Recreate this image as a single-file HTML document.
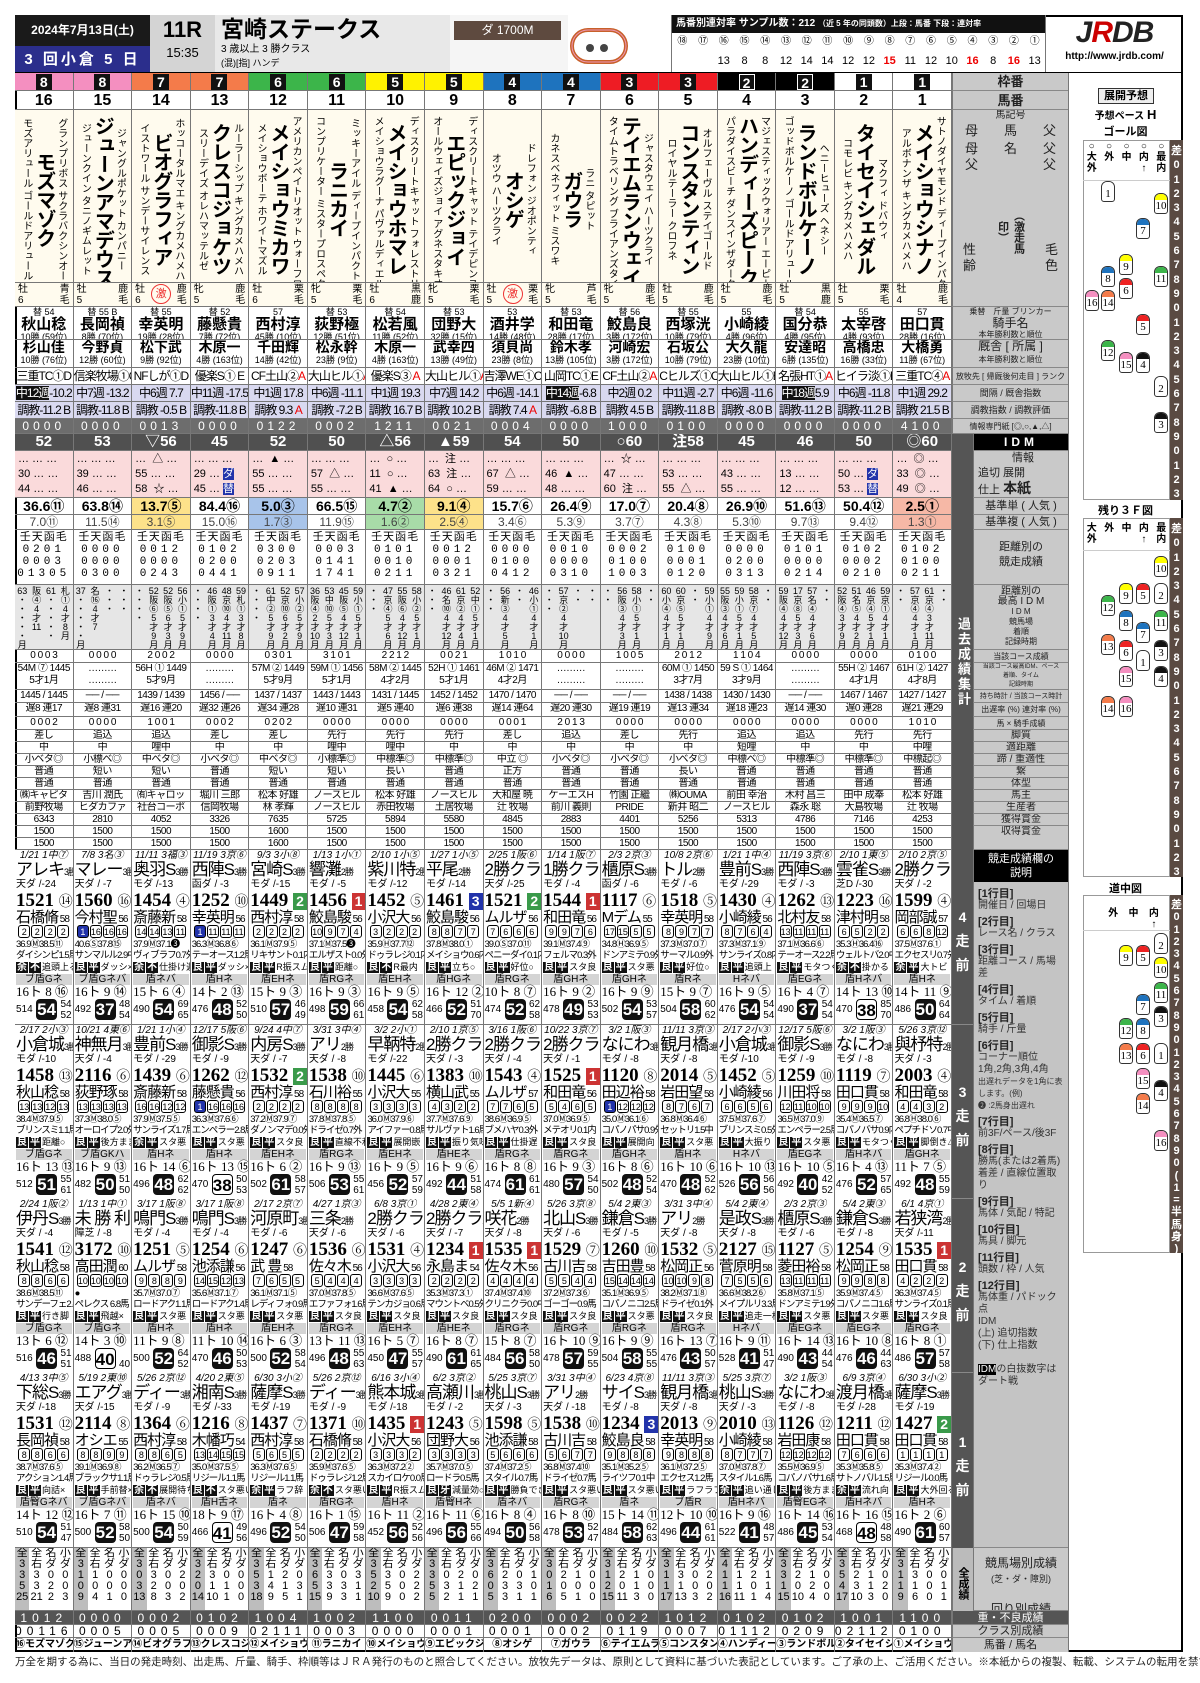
<!DOCTYPE html>
<html lang="ja"><head><meta charset="utf-8"><title>JRDB 宮崎ステークス</title>
<style>
*{box-sizing:border-box;margin:0;padding:0}
body{width:1200px;height:1683px;background:#fff;position:relative;overflow:hidden;font-family:"Liberation Sans","Noto Sans CJK JP",sans-serif;color:#000}
.a{position:absolute}
.sheet{left:15px;top:15px;width:1168px;height:1637px;border:2px solid #000}
.row{position:absolute;left:15px;width:937px;display:grid;grid-template-columns:repeat(16,1fr);border-bottom:1px solid #777}
.row>div{border-right:1px solid #777;overflow:hidden;text-align:center;position:relative}
.lab{position:absolute;left:952px;width:116px;background:#c9c9c9;border-bottom:1px solid #888;border-left:1px solid #777;text-align:center;font-size:10px;overflow:hidden;color:#222}
.wk>div{font-size:15px;font-weight:bold;display:flex;align-items:center;justify-content:center}
.wk span{display:inline-block;background:#111;color:#fff;width:16px;height:16px;line-height:16px;font-size:14px}
.um>div{font-size:16px;font-weight:bold;line-height:19px}
.nm>div{background:#fffbee;display:flex;flex-direction:row-reverse;justify-content:center;gap:1px;padding-top:6px}
.vt{writing-mode:vertical-rl;font-size:10px;line-height:11px;white-space:nowrap}
.vn{writing-mode:vertical-rl;font-size:20px;font-weight:bold;line-height:22px;white-space:nowrap;letter-spacing:-1px}
.sx>div{background:#fffbee;font-size:10px;line-height:11px;text-align:left;padding:1px 3px}
.sx b{float:right;font-weight:normal;text-align:right}
.jk>div{font-size:9px;line-height:10px}
.jk .n{font-size:15px;font-weight:bold;line-height:15px}
.tr>div{font-size:9px;line-height:10px}
.tr .n{font-size:14px;font-weight:bold;line-height:15px}
.hb>div{font-size:12px;line-height:16px;white-space:nowrap;letter-spacing:-1px}
.lv>div{background:#d9d9f0;font-size:12px;line-height:16px;white-space:nowrap;letter-spacing:-1px}
.inf>div{background:#6d6d6d;color:#fff;font-size:12px;line-height:14px;letter-spacing:4px}
.idm>div{background:#505050;color:#fff;font-size:15px;font-weight:bold;line-height:16px}
.pk>div{background:#fadadb;font-size:11px;line-height:15px;text-align:left;padding:1px 3px;white-space:pre}
.k1>div{font-size:14px;font-weight:bold;line-height:16px}
.k2>div{font-size:12px;line-height:14px;color:#444}
.ds>div{font-size:11px;line-height:12px;font-family:"Liberation Mono","Noto Sans CJK JP",monospace;letter-spacing:4px;padding-top:1px;white-space:nowrap}
.ds>div>span{letter-spacing:1px;font-family:"Liberation Sans","Noto Sans CJK JP",sans-serif;font-size:11px}
.bs>div{background:#e6e6e6;font-size:9px;line-height:9px;display:grid;grid-template-columns:repeat(4,1fr);padding-top:2px}
.sm>div{font-size:10px;line-height:12px;white-space:nowrap;letter-spacing:-.5px}
.rc>div{background:#fff;font-size:10px;text-align:left;padding:0 1px;height:174px}
.l1{font-size:10px;font-style:italic;height:11px;line-height:11px;text-align:center}
.l2{font-size:17px;height:18px;line-height:18px;white-space:nowrap;letter-spacing:-1px}
.l2 small{font-size:9px}
.l3{font-size:10px;height:12px;line-height:12px}
.l4{font-family:"Liberation Serif","Noto Serif CJK SC",serif;font-weight:bold;font-size:19px;height:19px;line-height:19px;white-space:nowrap}
.l4 .ci{font-size:14px;font-weight:normal}
.l4 .w{display:inline-block;color:#fff;font-family:"Liberation Sans",sans-serif;font-size:14px;width:14px;line-height:17px;text-align:center}
.l5{font-size:15px;height:15px;line-height:15px;white-space:nowrap;letter-spacing:-1px}
.l5 small{font-size:10px}
.l6{height:14px;display:flex;gap:1px;justify-content:center}
.l6 i{font-style:normal;border:1px solid #000;border-radius:3px;font-size:9px;width:12px;height:13px;line-height:12px;text-align:center}
.l7,.l8{font-size:9.5px;height:11px;line-height:11px;white-space:nowrap;letter-spacing:-1px}
.l9{font-size:9px;height:13px;line-height:13px;white-space:nowrap}
.l9 b{background:#111;color:#fff;font-size:10px;padding:0 1px;margin-right:1px}
.l10{background:#d4d4d4;font-size:10px;height:11px;line-height:11px;text-align:center}
.l11{font-family:"Liberation Serif",serif;font-size:13px;height:13px;line-height:13px;white-space:nowrap}
.l12{display:flex;align-items:center;justify-content:space-between;height:23px;font-size:10px}
.l12 b{background:#111;color:#fff;font-size:17px;border-radius:4px;width:21px;height:21px;line-height:21px;text-align:center}
.l12 b.o{background:#fff;color:#000;border:1px solid #000}
.l12 span{line-height:11px}
.zs>div{display:grid;grid-template-columns:repeat(4,1fr);font-size:11px;line-height:11px}
.zs>div>span{display:flex;flex-direction:column;align-items:center}
.zs>div>span:first-child{background:#bdbdbd}
.dk>div{background:#555;color:#fff;font-size:12px;line-height:14px;letter-spacing:5px}
.cl>div{font-size:12px;line-height:13px;letter-spacing:5px}
.hn>div{font-size:10px;font-weight:bold;line-height:14px;white-space:nowrap}
.mk{position:absolute;width:14px;height:21px;border:1px solid #333;border-radius:6px 6px 3px 3px;background:#fff;font-family:"Liberation Serif",serif;font-size:11px;text-align:center;line-height:25px;overflow:hidden}
.mk::before{content:"";position:absolute;left:0;top:0;width:100%;height:6px}
.c1::before{background:#fff}.c2::before{background:#111}.c3::before{background:#e22}.c4::before{background:#1e73be}.c5::before{background:#ff0}.c6::before{background:#3cb54a}.c7::before{background:#f47b4a}.c8::before{background:#f48fc0}
.scale{position:absolute;width:13px;background:#5a4a42;color:#fff;font-size:11px;line-height:14.3px;text-align:center;font-weight:bold}
.ex{font-size:10px;line-height:12px;text-align:left;padding:2px 4px;color:#333}
.ex b{display:block;font-size:11px;margin-top:4px;color:#222}
</style></head><body>
<div class="a sheet"></div>

<!-- HEADER -->
<div class="a" style="left:15px;top:15px;width:135px;height:31px;background:#1a1a1a;color:#fff;font-size:12px;font-weight:bold;line-height:31px;text-align:center">2024年7月13日(土)</div>
<div class="a" style="left:15px;top:46px;width:135px;height:27px;background:#2b2e8c;color:#fff;font-size:15px;font-weight:bold;line-height:27px;text-align:center;letter-spacing:3px">3 回小倉 5 日</div>
<div class="a" style="left:150px;top:15px;width:65px;height:58px;background:#d4d4d4;text-align:center"><div style="font-size:22px;font-weight:bold;line-height:30px">11R</div><div style="font-size:13px">15:35</div></div>
<div class="a" style="left:215px;top:15px;width:235px;height:58px;background:#e8e8e8;padding-left:6px"><div style="font-size:23px;font-weight:bold;line-height:28px">宮崎ステークス</div><div style="font-size:10px;line-height:14px">3 歳以上 3 勝クラス</div><div style="font-size:9px;line-height:12px">(混)[指] ハンデ</div></div>
<div class="a" style="left:450px;top:15px;width:118px;height:58px;background:#f5f5f5"></div>
<div class="a" style="left:454px;top:21px;width:107px;height:19px;background:#5e4a3f;color:#fff;font-size:12px;line-height:19px;text-align:center">ダ 1700M</div>
<div class="a" style="left:568px;top:15px;width:103px;height:58px;background:#fff">
<svg width="103" height="58"><rect x="4" y="15" width="54" height="32" rx="16" fill="none" stroke="#c8602a" stroke-width="4"/><rect x="4" y="15" width="54" height="32" rx="16" fill="none" stroke="#e9b" stroke-width="1"/><circle cx="22" cy="33" r="4" fill="#444"/><circle cx="36" cy="33" r="4" fill="#444"/></svg></div>
<div class="a" style="left:671px;top:15px;width:374px;height:58px;border-left:1px solid #777">
<div style="background:#111;color:#fff;font-size:10px;font-weight:bold;line-height:18px;padding-left:4px;white-space:nowrap">馬番別連対率 サンプル数：212 <span style="font-size:8px">（近 5 年の同頭数）上段：馬番 下段：連対率</span></div>
<div style="display:grid;grid-template-columns:repeat(18,1fr);font-size:10px;text-align:center;line-height:18px">
<span>⑱</span><span>⑰</span><span>⑯</span><span>⑮</span><span>⑭</span><span>⑬</span><span>⑫</span><span>⑪</span><span>⑩</span><span>⑨</span><span>⑧</span><span>⑦</span><span>⑥</span><span>⑤</span><span>④</span><span>③</span><span>②</span><span>①</span></div>
<div style="display:grid;grid-template-columns:repeat(18,1fr);font-size:11px;text-align:center;line-height:20px">
<span></span><span></span><span>13</span><span>8</span><span>8</span><span>12</span><span>14</span><span>14</span><span>12</span><span>12</span><span style="color:#e00;font-weight:bold">15</span><span>11</span><span>12</span><span>10</span><span style="color:#e00;font-weight:bold">16</span><span>8</span><span style="color:#e00;font-weight:bold">16</span><span>13</span></div></div>
<div class="a" style="left:1045px;top:15px;width:138px;height:58px;border-left:1px solid #777;text-align:center"><div style="font-size:30px;font-weight:bold;font-style:italic;line-height:36px;letter-spacing:-1px;color:#222">J<span style="color:#c00">R</span>DB</div><div style="font-size:10px;font-weight:bold">http://www.jrdb.com/</div></div>
<div class="a" style="left:15px;top:72px;width:1168px;border-top:1px solid #000"></div>

<!-- waku -->
<div class="row wk" style="top:73px;height:18px">
<div style="background:#f48fc0"><span>8</span></div><div style="background:#f48fc0"><span>8</span></div><div style="background:#f47b4a"><span>7</span></div><div style="background:#f47b4a"><span>7</span></div><div style="background:#3cb54a"><span>6</span></div><div style="background:#3cb54a"><span>6</span></div><div style="background:#fff200"><span>5</span></div><div style="background:#fff200"><span>5</span></div><div style="background:#1e73be"><span>4</span></div><div style="background:#1e73be"><span>4</span></div><div style="background:#ee1c24"><span>3</span></div><div style="background:#ee1c24"><span>3</span></div><div style="background:#000"><span style="border:1px solid #fff">2</span></div><div style="background:#000"><span style="border:1px solid #fff">2</span></div><div style="background:#fff"><span>1</span></div><div style="background:#fff"><span>1</span></div></div>
<div class="row um" style="top:91px;height:19px"><div>16</div><div>15</div><div>14</div><div>13</div><div>12</div><div>11</div><div>10</div><div>9</div><div>8</div><div>7</div><div>6</div><div>5</div><div>4</div><div>3</div><div>2</div><div>1</div></div>

<!-- names -->
<div class="row nm" style="top:110px;height:173px">
<div><span class="vt">グランプリボス サクラバクシンオー</span><span class="vn">モズマゾク</span><span class="vt">モズアリュール ゴールドアリュール</span></div>
<div><span class="vt">ジャングルポケット カンパニー</span><span class="vn">ジューンアマデウス</span><span class="vt">ジューンクイン タニノギムレット</span></div>
<div><span class="vt">ホッコータルマエ キングカメハメハ</span><span class="vn">ビオグラフィア</span><span class="vt">イストワール サンデーサイレンス</span></div>
<div><span class="vt">ルーラーシップ キングカメハメハ</span><span class="vn">クレスコジョケツ</span><span class="vt">スリーデイズ オレハマッテルゼ</span></div>
<div><span class="vt">アメリカンペイトリオット ウォーフロント</span><span class="vn">メイショウミカワ</span><span class="vt">メイショウボーテ ホワイトマズル</span></div>
<div><span class="vt">ミッキーアイル ディープインパクト</span><span class="vn">ラニカイ</span><span class="vt">コンプリケーター ミスタープロスペクター</span></div>
<div><span class="vt">ディスクリートキャット フォレストリー</span><span class="vn">メイショウホマレ</span><span class="vt">メイショウラグーナ パヴァルディエル</span></div>
<div><span class="vt">ディスクリートキャット テイデピンス</span><span class="vn">エピックジョイ</span><span class="vt">オールウェイズジョイ アグネスタキオン</span></div>
<div><span class="vt">ドレフォン ジオポンティ</span><span class="vn">オシゲ</span><span class="vt">オツウ ハーツクライ</span></div>
<div><span class="vt">ラニ タピット</span><span class="vn">ガウラ</span><span class="vt">カネスベネフィット ミスワキ</span></div>
<div><span class="vt">ジャスタウェイ ハーツクライ</span><span class="vn">テイエムランウェイ</span><span class="vt">タイムトラベリング ブライアンズタイム</span></div>
<div><span class="vt">オルフェーヴル ステイゴールド</span><span class="vn">コンスタンティン</span><span class="vt">ロイヤルテーラー クロフネ</span></div>
<div><span class="vt">マジェスティックウォリアー エーピーインディ</span><span class="vn">ハンディーズピーク</span><span class="vt">パラダイスビーチ ダンスインザダーク</span></div>
<div><span class="vt">ヘニーヒューズ ヘネシー</span><span class="vn">ランドボルケーノ</span><span class="vt">ゴッドボルケーノ ゴールドアリュール</span></div>
<div><span class="vt">マクフィ ドバウィ</span><span class="vn">タイセイシェダル</span><span class="vt">コモレビ キングカメハメハ</span></div>
<div><span class="vt">サトノダイヤモンド ディープインパクト</span><span class="vn">メイショウシナノ</span><span class="vt">アルボナンザ キングカメハメハ</span></div></div>
<div class="row sx" style="top:283px;height:24px">
<div>牡<b>青</b><br>6<b>毛</b></div><div>牡<b>鹿</b><br>5<b>毛</b></div><div>牡<b>鹿</b><br>6<b>毛</b><span style="position:absolute;left:19px;top:1px;width:20px;height:20px;border:1px solid #e33;border-radius:50%;color:#e33;font-size:11px;line-height:18px;text-align:center">激</span></div><div>牝<b>鹿</b><br>5<b>毛</b></div><div>牡<b>栗</b><br>6<b>毛</b></div><div>牝<b>栗</b><br>5<b>毛</b></div><div>牡<b>黒</b><br>6<b>鹿</b></div><div>牝<b>栗</b><br>5<b>毛</b></div><div>牡<b>栗</b><br>5<b>毛</b><span style="position:absolute;left:19px;top:1px;width:20px;height:20px;border:1px solid #e33;border-radius:50%;color:#e33;font-size:11px;line-height:18px;text-align:center">激</span></div><div>牝<b>芦</b><br>5<b>毛</b></div><div>牝<b>鹿</b><br>5<b>毛</b></div><div>牡<b>鹿</b><br>5<b>毛</b></div><div>牡<b>鹿</b><br>5<b>毛</b></div><div>牡<b>黒</b><br>5<b>鹿</b></div><div>牡<b>栗</b><br>5<b>毛</b></div><div>牡<b>鹿</b><br>4<b>毛</b></div></div>
<div class="row jk" style="top:307px;height:33px">
<div>替 54<div class="n">秋山稔</div>10勝 (59位)</div><div>替 55 B<div class="n">長岡禎</div>8勝 (70位)</div><div>替 55<div class="n">幸英明</div>19勝 (28位)</div><div>替 52<div class="n">藤懸貴</div>7勝 (72位)</div><div>57<div class="n">西村淳</div>45勝 (10位)</div><div>替 53<div class="n">荻野極</div>12勝 (51位)</div><div>替 54<div class="n">松若風</div>11勝 (52位)</div><div>替 53<div class="n">団野大</div>32勝 (15位)</div><div>53<div class="n">酒井学</div>14勝 (48位)</div><div>替 53<div class="n">和田竜</div>28勝 (17位)</div><div>替 56<div class="n">鮫島良</div>3勝 (172位)</div><div>替 55<div class="n">西塚洸</div>10勝 (79位)</div><div>55<div class="n">小崎綾</div>4勝 (96位)</div><div>替 54<div class="n">国分恭</div>4勝 (95位)</div><div>55<div class="n">太宰啓</div>4勝 (93位)</div><div>57<div class="n">田口貫</div>28勝 (16位)</div></div>
<div class="row tr" style="top:340px;height:28px">
<div><div class="n">杉山佳</div>10勝 (76位)</div><div><div class="n">今野貞</div>12勝 (60位)</div><div><div class="n">松下武</div>9勝 (92位)</div><div><div class="n">木原一</div>4勝 (163位)</div><div><div class="n">千田輝</div>14勝 (42位)</div><div><div class="n">松永幹</div>23勝 (9位)</div><div><div class="n">木原一</div>4勝 (163位)</div><div><div class="n">武幸四</div>13勝 (49位)</div><div><div class="n">須貝尚</div>23勝 (8位)</div><div><div class="n">鈴木孝</div>13勝 (105位)</div><div><div class="n">河崎宏</div>3勝 (172位)</div><div><div class="n">石坂公</div>10勝 (79位)</div><div><div class="n">大久龍</div>23勝 (10位)</div><div><div class="n">安達昭</div>6勝 (135位)</div><div><div class="n">高橋忠</div>16勝 (33位)</div><div><div class="n">大橋勇</div>11勝 (67位)</div></div>
<div class="row hb" style="top:368px;height:17px">
<div>三重TC①D</div><div>信楽牧場①C</div><div>NFしが①D</div><div>優楽S① E</div><div>CF土山②<span style="color:#e00">A</span></div><div>大山ヒル①<span style="color:#e00">A</span></div><div>優楽S③ <span style="color:#e00">A</span></div><div>大山ヒル①<span style="color:#e00">A</span></div><div>吉澤WE①C</div><div>山岡TC①E</div><div>CF土山②<span style="color:#e00">A</span></div><div>Cヒルズ①C</div><div>大山ヒル①E</div><div>名張HT①<span style="color:#e00">A</span></div><div>ヒイラ淡①E</div><div>三重TC④<span style="color:#e00">A</span></div></div>
<div class="row lv" style="top:385px;height:17px">
<div><span style="background:#111;color:#fff">中12週</span>-10.2</div><div>中7週 -13.2</div><div>中6週 7.7</div><div>中11週 -17.5</div><div>中1週 17.8</div><div>中6週 -11.1</div><div>中1週 19.3</div><div>中7週 14.2</div><div>中6週 -14.1</div><div><span style="background:#111;color:#fff">中14週</span>-6.8</div><div>中2週 0.2</div><div>中11週 -2.7</div><div>中6週 -11.6</div><div><span style="background:#111;color:#fff">中18週</span>5.9</div><div>中6週 -11.8</div><div>中1週 29.2</div></div>
<div class="row lv" style="top:402px;height:17px">
<div>調教-11.2 B</div><div>調教-11.8 B</div><div>調教 -0.5 B</div><div>調教-11.8 B</div><div>調教 9.3 <span style="color:#e00">A</span></div><div>調教 -7.2 B</div><div>調教 16.7 B</div><div>調教 10.2 B</div><div>調教 7.4 <span style="color:#e00">A</span></div><div>調教 -6.8 B</div><div>調教 4.5 B</div><div>調教-11.8 B</div><div>調教 -8.0 B</div><div>調教-11.2 B</div><div>調教-11.2 B</div><div>調教 21.5 B</div></div>
<div class="row inf" style="top:419px;height:15px"><div>0000</div><div>0000</div><div>0013</div><div>0000</div><div>0122</div><div>0002</div><div>1211</div><div>0021</div><div>0004</div><div>0000</div><div>1000</div><div>0100</div><div>0000</div><div>0000</div><div>0000</div><div>4100</div></div>
<div class="row idm" style="top:434px;height:17px"><div>52</div><div>53</div><div>▽56</div><div>45</div><div>52</div><div>50</div><div>△56</div><div>▲59</div><div>54</div><div>50</div><div>○60</div><div>注58</div><div>45</div><div>46</div><div>50</div><div>◎60</div></div>
<div class="row pk" style="top:451px;height:47px">
<div>… … …
30 … …
44 … …</div><div>… … …
39 … …
46 … …</div><div>…  △ …
55 … …
58  ☆ …</div><div>… … …
29 … <span style="background:#2233aa;color:#fff">ダ</span>
45 … <span style="background:#2233aa;color:#fff">替</span></div><div>…  ▲ …
55 … …
55 … …</div><div>… … …
57  △ …
55 … …</div><div>…  ○ …
11  ○ …
41  ▲ …</div><div>…  注 …
63  注 …
64  ○ …</div><div>… … …
67  △ …
59 … …</div><div>… … …
46  ▲ …
48 … …</div><div>…  ☆ …
47 … …
60  注 …</div><div>… … …
53 … …
55  △ …</div><div>… … …
43 … …
55 … …</div><div>… … …
13 … …
12 … …</div><div>… … …
50 … <span style="background:#2233aa;color:#fff">ダ</span>
53 … <span style="background:#2233aa;color:#fff">替</span></div><div>…  ◎ …
33  ◎ …
49  ◎ …</div></div>
<div class="row k1" style="top:498px;height:17px"><div>36.6⑪</div><div>63.8⑭</div><div style="background:#fde28a">13.7⑤</div><div>84.4⑯</div><div style="background:#a8c4ea">5.0③</div><div>66.5⑮</div><div style="background:#a8dca8">4.7②</div><div style="background:#fde28a">9.1④</div><div>15.7⑥</div><div>26.4⑨</div><div>17.0⑦</div><div>20.4⑧</div><div>26.9⑩</div><div>51.6⑬</div><div>50.4⑫</div><div style="background:#f6b8a6">2.5①</div></div>
<div class="row k2" style="top:515px;height:15px"><div>7.0⑪</div><div>11.5⑭</div><div style="background:#fde28a">3.1⑤</div><div>15.0⑯</div><div style="background:#a8c4ea">1.7③</div><div>11.9⑮</div><div style="background:#a8dca8">1.6②</div><div style="background:#fde28a">2.5④</div><div>3.4⑥</div><div>5.3⑨</div><div>3.7⑦</div><div>4.3⑧</div><div>5.3⑩</div><div>9.7⑬</div><div>9.4⑫</div><div style="background:#f6b8a6">1.3①</div></div>
<div class="row ds" style="top:530px;height:55px">
<div><span>壬天函毛</span><br>0201<br>0003<br>01305</div><div><span>壬天函毛</span><br>0000<br>0000<br>0300</div><div><span>壬天函毛</span><br>0012<br>0000<br>0243</div><div><span>壬天函毛</span><br>0102<br>0200<br>0441</div><div><span>壬天函毛</span><br>0300<br>0203<br>0911</div><div><span>壬天函毛</span><br>0003<br>0141<br>1741</div><div><span>壬天函毛</span><br>0101<br>0010<br>0211</div><div><span>壬天函毛</span><br>0012<br>0001<br>0321</div><div><span>壬天函毛</span><br>0000<br>0100<br>0412</div><div><span>壬天函毛</span><br>0010<br>0000<br>0310</div><div><span>壬天函毛</span><br>0002<br>0100<br>1003</div><div><span>壬天函毛</span><br>0100<br>0001<br>0120</div><div><span>壬天函毛</span><br>0000<br>0200<br>0313</div><div><span>壬天函毛</span><br>0101<br>0000<br>0214</div><div><span>壬天函毛</span><br>0102<br>0002<br>0210</div><div><span>壬天函毛</span><br>0102<br>0100<br>0211</div></div>
<div class="row bs" style="top:585px;height:65px">
<div><span>63<br>・<br>・<br>・<br>・<br>・<br>月</span><span>阪<br>④<br>4<br>才<br>11<br></span><span>61<br>・<br>・<br>・<br>・<br>・</span><span>札<br>①<br>4<br>才<br>8<br>月</span></div>
<div><span>37<br>・<br>・<br>・<br>・<br>・<br>月</span><span>名<br>⑯<br>4<br>才<br>7</span><span>・<br>・<br>・</span><span>・<br>・<br>・</span></div>
<div><span>・<br>・<br>・<br>・</span><span>52<br>阪<br>⑥<br>5<br>才<br>9<br>月</span><span>52<br>阪<br>⑤<br>6<br>才<br>3<br>月</span><span>56<br>小<br>①<br>5<br>才<br>9<br>月</span></div>
<div><span>・<br>・<br>・<br>・</span><span>46<br>阪<br>①<br>3<br>才<br>4<br>月</span><span>48<br>京<br>⑩<br>4<br>才<br>11<br>月</span><span>59<br>札<br>①<br>3<br>才<br>8<br>月</span></div>
<div><span>・<br>・<br>・<br>・</span><span>61<br>中<br>②<br>5<br>才<br>9<br>月</span><span>52<br>京<br>⑩<br>6<br>才<br>2<br>月</span><span>57<br>小<br>②<br>5<br>才<br>9<br>月</span></div>
<div><span>36<br>阪<br>④<br>2<br>才<br>10<br>月</span><span>53<br>中<br>⑩<br>5<br>才<br>3<br>月</span><span>45<br>阪<br>⑤<br>4<br>才<br>12<br>月</span><span>59<br>小<br>①<br>5<br>才<br>1<br>月</span></div>
<div><span>・<br>・<br>・</span><span>47<br>京<br>④<br>5<br>才<br>6<br>月</span><span>55<br>阪<br>⑥<br>4<br>才<br>12<br>月</span><span>58<br>小<br>②<br>5<br>才<br>1<br>月</span></div>
<div><span>・<br>・<br>・</span><span>46<br>名<br>⑩<br>4<br>才<br>12<br>月</span><span>61<br>京<br>②<br>4<br>才<br>4<br>月</span><span>52<br>中<br>①<br>5<br>才<br>1<br>月</span></div>
<div><span>・<br>・<br>・</span><span>56<br>新<br>③<br>4<br>才<br>5<br>月</span><span>・<br>・</span><span>46<br>小<br>①<br>4<br>才<br>1<br>月</span></div>
<div><span>・<br>・<br>・</span><span>57<br>京<br>②<br>4<br>才<br>10<br>月</span><span>・<br>・</span><span>・<br>・</span></div>
<div><span>・<br>・</span><span>56<br>阪<br>③<br>4<br>才<br>3<br>月</span><span>58<br>小<br>①<br>5<br>才<br>1<br>月</span><span>・<br>・</span></div>
<div><span>60<br>小<br>④<br>4<br>才<br>1<br>月</span><span>60<br>京<br>⑤<br>5<br>才<br>1<br>月</span><span>・<br>・</span><span>59<br>小<br>①<br>4<br>才<br>9<br>月</span></div>
<div><span>55<br>阪<br>③<br>4<br>才<br>6<br>月</span><span>59<br>小<br>①<br>5<br>才<br>1<br>月</span><span>58<br>京<br>⑦<br>4<br>才<br>5<br>月</span><span>・<br>・</span></div>
<div><span>59<br>阪<br>④<br>4<br>才<br>12<br>月</span><span>17<br>京<br>⑧<br>5<br>才<br>3<br>月</span><span>57<br>名<br>④<br>4<br>才<br>6<br>月</span><span>・<br>・</span></div>
<div><span>52<br>阪<br>④<br>3<br>才<br>9<br>月</span><span>51<br>名<br>⑤<br>4<br>才<br>2<br>月</span><span>46<br>京<br>④<br>5<br>才<br>1<br>月</span><span>59<br>京<br>①<br>4<br>才<br>1<br>月</span></div>
<div><span>・<br>・</span><span>57<br>京<br>④<br>4<br>才<br>1<br>月</span><span>61<br>京<br>④<br>3<br>才<br>11<br>月</span><span>・<br>・</span></div></div>
<div class="row sm" style="top:650px;height:13px"><div>0 0 0 3</div><div>0 0 0 0</div><div>2 0 0 2</div><div>0 0 0 0</div><div>0 3 0 1</div><div>3 1 0 1</div><div>2 2 1 2</div><div>0 0 2 1</div><div>1 0 1 0</div><div>0 0 0 0</div><div>1 0 0 5</div><div>2 0 1 2</div><div>1 1 0 4</div><div>0 0 0 0</div><div>0 0 0 0</div><div>0 1 0 0</div></div>
<div class="row sm" style="top:663px;height:27px"><div>54M ⑦ 1445<br>5才1月</div><div>………<br>………</div><div>56H ① 1449<br>5才9月</div><div>………<br>………</div><div>57M ② 1449<br>5才9月</div><div>59M ① 1456<br>5才1月</div><div>58M ② 1445<br>4才2月</div><div>52H ① 1461<br>5才1月</div><div>46M ② 1471<br>4才2月</div><div>………<br>………</div><div>………<br>………</div><div>60M ① 1450<br>3才7月</div><div>59 S ① 1464<br>3才9月</div><div>………<br>………</div><div>55H ② 1467<br>4才1月</div><div>61H ② 1427<br>4才8月</div></div>
<div class="row sm" style="top:690px;height:13px"><div>1445 / 1445</div><div>── / ──</div><div>1439 / 1439</div><div>1456 / ──</div><div>1437 / 1437</div><div>1443 / 1443</div><div>1431 / 1445</div><div>1452 / 1452</div><div>1470 / 1470</div><div>── / ──</div><div>── / ──</div><div>1438 / 1438</div><div>1430 / 1430</div><div>── / ──</div><div>1467 / 1467</div><div>1427 / 1427</div></div>
<div class="row sm" style="top:703px;height:14px"><div>遅8 連17</div><div>遅8 連31</div><div>遅16 連20</div><div>遅32 連26</div><div>遅34 連28</div><div>遅10 連31</div><div>遅5 連40</div><div>遅6 連38</div><div>遅14 連64</div><div>遅20 連30</div><div>遅19 連19</div><div>遅13 連34</div><div>遅18 連23</div><div>遅14 連30</div><div>遅0 連28</div><div>遅21 連29</div></div>
<div class="row sm" style="top:717px;height:13px"><div>0 0 0 2</div><div>0 0 0 0</div><div>1 0 0 1</div><div>0 0 0 2</div><div>0 2 0 2</div><div>0 0 0 0</div><div>0 0 0 0</div><div>0 0 0 0</div><div>0 0 0 1</div><div>2 0 1 3</div><div>0 0 0 0</div><div>0 0 0 0</div><div>0 0 0 0</div><div>0 0 0 0</div><div>0 0 0 0</div><div>1 0 1 0</div></div>
<div class="row sm" style="top:730px;height:12px"><div>差し</div><div>追込</div><div>追込</div><div>差し</div><div>差し</div><div>先行</div><div>先行</div><div>先行</div><div>差し</div><div>追込</div><div>差し</div><div>先行</div><div>追込</div><div>追込</div><div>先行</div><div>先行</div></div>
<div class="row sm" style="top:742px;height:12px"><div>中</div><div>中</div><div>哩中</div><div>中</div><div>中</div><div>哩中</div><div>哩中</div><div>中</div><div>中</div><div>中</div><div>中</div><div>中</div><div>短哩</div><div>中</div><div>中</div><div>中哩</div></div>
<div class="row sm" style="top:754px;height:12px"><div>小ベタ◎</div><div>小標ベ◎</div><div>中ベタ◎</div><div>小ベタ◎</div><div>中ベタ◎</div><div>小標準◎</div><div>中標準◎</div><div>中標準◎</div><div>中立 ◎</div><div>小ベタ◎</div><div>小ベタ◎</div><div>小ベタ◎</div><div>中標ベ◎</div><div>中標準◎</div><div>中標準◎</div><div>中標起◎</div></div>
<div class="row sm" style="top:766px;height:12px"><div>普通</div><div>短い</div><div>短い</div><div>普通</div><div>短い</div><div>短い</div><div>長い</div><div>普通</div><div>正方</div><div>普通</div><div>普通</div><div>長い</div><div>普通</div><div>普通</div><div>普通</div><div>普通</div></div>
<div class="row sm" style="top:778px;height:12px"><div>普通</div><div>普通</div><div>普通</div><div>普通</div><div>普通</div><div>普通</div><div>普通</div><div>普通</div><div>普通</div><div>普通</div><div>普通</div><div>普通</div><div>普通</div><div>普通</div><div>普通</div><div>普通</div></div>
<div class="row sm" style="top:790px;height:12px"><div>㈱キャピタ</div><div>吉川 潤氏</div><div>㈲キャロッ</div><div>堀川 三郎</div><div>松本 好雄</div><div>ノースヒル</div><div>松本 好雄</div><div>ノースヒル</div><div>大和屋 暁</div><div>ケーエスH</div><div>竹園 正繼</div><div>㈱OUMA</div><div>前田 幸治</div><div>木村 昌三</div><div>田中 成奉</div><div>松本 好雄</div></div>
<div class="row sm" style="top:802px;height:12px"><div>前野牧場</div><div>ヒダカファ</div><div>社台コーポ</div><div>信岡牧場</div><div>林 孝輝</div><div>ノースヒル</div><div>赤田牧場</div><div>土居牧場</div><div>辻 牧場</div><div>前川 義則</div><div>PRIDE</div><div>新井 昭二</div><div>ノースヒル</div><div>森永 聡</div><div>大島牧場</div><div>辻 牧場</div></div>
<div class="row sm" style="top:814px;height:12px;font-size:12px"><div>6343</div><div>2810</div><div>4052</div><div>3326</div><div>7635</div><div>5725</div><div>5894</div><div>5580</div><div>4845</div><div>2883</div><div>4401</div><div>5256</div><div>5313</div><div>4786</div><div>7146</div><div>4253</div></div>
<div class="row sm" style="top:826px;height:12px"><div>1500</div><div>1500</div><div>1500</div><div>1500</div><div>1600</div><div>1500</div><div>1500</div><div>1500</div><div>1500</div><div>1500</div><div>1500</div><div>1500</div><div>1500</div><div>1500</div><div>1500</div><div>1500</div></div>
<div class="row sm" style="top:838px;height:12px"><div>1500</div><div>1500</div><div>1500</div><div>1500</div><div>1600</div><div>1500</div><div>1500</div><div>1500</div><div>1500</div><div>1500</div><div>1500</div><div>1500</div><div>1500</div><div>1500</div><div>1500</div><div>1500</div></div>

<!-- RACES row 4 -->
<div class="row rc" style="top:850px;height:175px">
<div><div class="l1">1/21 1中⑦</div><div class="l2">アレキ<small>3勝</small></div><div class="l3">天ダ /-24</div><div class="l4">1521 <span class="ci">⑭</span></div><div class="l5">石橋脩<small> 58</small></div><div class="l6"><i>2</i><i>2</i><i>2</i><i>2</i></div><div class="l7">36.9Ⓜ38.5⑪</div><div class="l8">ダイシンピ1.5馬</div><div class="l9"><b>余</b><b>不</b>追頭上る</div><div class="l10">ブ盾Gネ</div><div class="l11">16ト 8 ⑯</div><div class="l12"><span>514</span><b>54</b><span>54<br>52</span></div></div>
<div><div class="l1">7/8 3名③</div><div class="l2">マレー<small>3勝</small></div><div class="l3">天ダ / -7</div><div class="l4">1560 <span class="ci">⑯</span></div><div class="l5">今村聖<small> 56</small></div><div class="l6"><i style="background:#2233aa;color:#fff">1</i><i>16</i><i>16</i><i>16</i></div><div class="l7">40.6Ⓢ37.8⑮</div><div class="l8">サンマルル2.9中</div><div class="l9"><b>良</b><b>平</b>ダッシ×</div><div class="l10">ブ盾Gネバ</div><div class="l11">16ト 9 ⑭</div><div class="l12"><span>492</span><b>37</b><span>48<br>54</span></div></div>
<div><div class="l1">11/11 3福③</div><div class="l2">奥羽S<small>3勝</small></div><div class="l3">モダ /-13</div><div class="l4">1454 <span class="ci">④</span></div><div class="l5">斎藤新<small> 58</small></div><div class="l6"><i>14</i><i>14</i><i>13</i><i>11</i></div><div class="l7">37.9Ⓜ37.1❸</div><div class="l8">ヴィブラフ0.7外</div><div class="l9"><b>余</b><b>不</b>仕掛け遅</div><div class="l10">盾ネバ</div><div class="l11">15ト 6 ④</div><div class="l12"><span>490</span><b>54</b><span>69<br>65</span></div></div>
<div><div class="l1">11/19 3京⑥</div><div class="l2">西陣S<small>3勝</small></div><div class="l3">函ダ / -3</div><div class="l4">1252 <span class="ci">⑩</span></div><div class="l5">幸英明<small> 56</small></div><div class="l6"><i style="background:#2233aa;color:#fff">1</i><i>11</i><i>11</i><i>11</i></div><div class="l7">36.3Ⓜ36.8⑥</div><div class="l8">テーオース1.2馬</div><div class="l9"><b>良</b><b>平</b>ダッシ×</div><div class="l10">盾Hネ</div><div class="l11">14ト 2 ⑬</div><div class="l12"><span>476</span><b>48</b><span>52<br>50</span></div></div>
<div><div class="l1">9/3 3小⑧</div><div class="l2">宮崎S<small>3勝</small></div><div class="l3">モダ /-15</div><div class="l4">1449 <span class="w" style="background:#3a9a4a">2</span></div><div class="l5">西村淳<small> 58</small></div><div class="l6"><i>2</i><i>2</i><i>2</i><i>2</i></div><div class="l7">36.1Ⓜ37.9⑤</div><div class="l8">リキサント0.1内</div><div class="l9"><b>良</b><b>平</b>R振スム</div><div class="l10">盾EHネ</div><div class="l11">15ト 9 ③</div><div class="l12"><span>510</span><b>57</b><span>46<br>49</span></div></div>
<div><div class="l1">1/13 1小①</div><div class="l2">響灘<small>2勝</small></div><div class="l3">モダ / -5</div><div class="l4">1456 <span class="w" style="background:#c33">1</span></div><div class="l5">鮫島駿<small> 56</small></div><div class="l6"><i>10</i><i>9</i><i>7</i><i>4</i></div><div class="l7">37.1Ⓜ37.5❸</div><div class="l8">エルザスト0.0外</div><div class="l9"><b>良</b><b>平</b>距離○</div><div class="l10">盾RGネ</div><div class="l11">16ト 9 ③</div><div class="l12"><span>498</span><b>59</b><span>66<br>61</span></div></div>
<div><div class="l1">2/10 1小⑤</div><div class="l2">紫川特<small>2勝</small></div><div class="l3">モダ /-12</div><div class="l4">1452 <span class="ci">⑤</span></div><div class="l5">小沢大<small> 56</small></div><div class="l6"><i>3</i><i>2</i><i>2</i><i>2</i></div><div class="l7">35.9Ⓗ37.7⑫</div><div class="l8">ドゥラレジ0.1内</div><div class="l9"><b>良</b><b>不</b>R最内</div><div class="l10">盾EHネ</div><div class="l11">16ト 9 ⑤</div><div class="l12"><span>458</span><b>54</b><span>62<br>58</span></div></div>
<div><div class="l1">1/27 1小⑤</div><div class="l2">平尾<small>2勝</small></div><div class="l3">モダ /-14</div><div class="l4">1461 <span class="w" style="background:#2233aa">3</span></div><div class="l5">鮫島駿<small> 56</small></div><div class="l6"><i>8</i><i>8</i><i>7</i><i>7</i></div><div class="l7">37.8Ⓜ38.0①</div><div class="l8">メイショウ0.6内</div><div class="l9"><b>良</b><b>平</b>立ち○</div><div class="l10">盾HGネ</div><div class="l11">16ト 12 ②</div><div class="l12"><span>466</span><b>52</b><span>51<br>70</span></div></div>
<div><div class="l1">2/25 1阪⑥</div><div class="l2">2勝クラ<small>2勝</small></div><div class="l3">天ダ /-25</div><div class="l4">1521 <span class="w" style="background:#3a9a4a">2</span></div><div class="l5">ムルザ<small> 56</small></div><div class="l6"><i>7</i><i>6</i><i>6</i><i>6</i></div><div class="l7">39.0Ⓢ37.0⑪</div><div class="l8">ペニーダイ0.1内</div><div class="l9"><b>良</b><b>平</b>好位○</div><div class="l10">盾RGネ</div><div class="l11">10ト 8 ⑦</div><div class="l12"><span>474</span><b>52</b><span>62<br>58</span></div></div>
<div><div class="l1">1/14 1阪⑦</div><div class="l2">1勝クラ<small>1勝</small></div><div class="l3">モダ / -4</div><div class="l4">1544 <span class="w" style="background:#c33">1</span></div><div class="l5">和田竜<small> 56</small></div><div class="l6"><i>9</i><i>9</i><i>7</i><i>6</i></div><div class="l7">39.1Ⓜ37.4⑨</div><div class="l8">フェルマ0.3外</div><div class="l9"><b>良</b><b>平</b>スタ良</div><div class="l10">盾GHネ</div><div class="l11">16ト 9 ②</div><div class="l12"><span>478</span><b>49</b><span>53<br>53</span></div></div>
<div><div class="l1">2/3 2京③</div><div class="l2">櫃原S<small>3勝</small></div><div class="l3">函ダ / -6</div><div class="l4">1117 <span class="ci">⑥</span></div><div class="l5">Mデム<small> 55</small></div><div class="l6"><i>17</i><i>15</i><i>5</i><i>5</i></div><div class="l7">34.8Ⓗ36.9⑤</div><div class="l8">ドンアミテ0.9外</div><div class="l9"><b>良</b><b>平</b>スタ悪</div><div class="l10">盾GHネ</div><div class="l11">16ト 9 ⑨</div><div class="l12"><span>502</span><b>54</b><span>53<br>57</span></div></div>
<div><div class="l1">10/8 2京⑥</div><div class="l2">トル<small>2勝</small></div><div class="l3">モダ / -6</div><div class="l4">1518 <span class="ci">⑤</span></div><div class="l5">幸英明<small> 58</small></div><div class="l6"><i>8</i><i>9</i><i>7</i><i>7</i></div><div class="l7">37.3Ⓜ37.0⑦</div><div class="l8">サーマル0.9外</div><div class="l9"><b>良</b><b>平</b>好位○</div><div class="l10">盾Rネ</div><div class="l11">15ト 9 ⑦</div><div class="l12"><span>504</span><b>58</b><span>60<br>62</span></div></div>
<div><div class="l1">1/21 1中④</div><div class="l2">豊前S<small>3勝</small></div><div class="l3">モダ /-29</div><div class="l4">1430 <span class="ci">④</span></div><div class="l5">小崎綾<small> 56</small></div><div class="l6"><i>8</i><i>7</i><i>6</i><i>4</i></div><div class="l7">37.3Ⓜ37.1⑨</div><div class="l8">サンライズ0.8内</div><div class="l9"><b>良</b><b>平</b>追頭上</div><div class="l10">Hネバ</div><div class="l11">16ト 9 ⑤</div><div class="l12"><span>476</span><b>54</b><span>54<br>54</span></div></div>
<div><div class="l1">11/19 3京⑥</div><div class="l2">西陣S<small>3勝</small></div><div class="l3">モダ / -3</div><div class="l4">1262 <span class="ci">⑬</span></div><div class="l5">北村友<small> 58</small></div><div class="l6"><i>13</i><i>11</i><i>11</i><i>11</i></div><div class="l7">37.1Ⓜ36.6⑥</div><div class="l8">テーオース2.2馬</div><div class="l9"><b>良</b><b>平</b>モタつく</div><div class="l10">盾EGネ</div><div class="l11">16ト 4 ⑦</div><div class="l12"><span>490</span><b>37</b><span>54<br>54</span></div></div>
<div><div class="l1">2/10 1東⑤</div><div class="l2">雲雀S<small>3勝</small></div><div class="l3">芝D /-30</div><div class="l4">1223 <span class="ci">⑯</span></div><div class="l5">津村明<small> 58</small></div><div class="l6"><i>6</i><i>5</i><i>2</i><i>2</i></div><div class="l7">35.3Ⓗ36.4⑯</div><div class="l8">ウェルトバ2.0中</div><div class="l9"><b>余</b><b>不</b>掛かる</div><div class="l10">盾Hネバ</div><div class="l11">14ト 13 ⑩</div><div class="l12"><span>470</span><b class="o">38</b><span>85<br>70</span></div></div>
<div><div class="l1">2/10 2京⑤</div><div class="l2">2勝クラ<small>2勝</small></div><div class="l3">天ダ / -2</div><div class="l4">1599 <span class="ci">④</span></div><div class="l5">岡部誠<small> 57</small></div><div class="l6"><i>6</i><i>6</i><i>8</i><i>12</i></div><div class="l7">37.5Ⓜ37.6①</div><div class="l8">エクセスリ0.7先</div><div class="l9"><b>余</b><b>平</b>大トビ</div><div class="l10">盾Hネ</div><div class="l11">14ト 11 ⑨</div><div class="l12"><span>486</span><b>50</b><span>64<br>64</span></div></div></div>

<!-- RACES row 3 -->
<div class="row rc" style="top:1025px;height:174px">
<div><div class="l1">2/17 2小③</div><div class="l2">小倉城<small>3勝</small></div><div class="l3">モダ /-10</div><div class="l4">1458 <span class="ci">⑬</span></div><div class="l5">秋山稔<small> 58</small></div><div class="l6"><i>13</i><i>13</i><i>12</i><i>13</i></div><div class="l7">38.4Ⓜ37.9⑤</div><div class="l8">ブリンスミ1.1馬</div><div class="l9"><b>良</b><b>平</b>距離○</div><div class="l10">ブ盾Gネ</div><div class="l11">16ト 13 ⑬</div><div class="l12"><span>512</span><b>51</b><span>55<br>61</span></div></div>
<div><div class="l1">10/21 4東⑥</div><div class="l2">神無月<small>3勝</small></div><div class="l3">天ダ / -4</div><div class="l4">2116 <span class="ci">⑥</span></div><div class="l5">荻野琢<small> 58</small></div><div class="l6"><i>13</i><i>13</i><i>13</i><i>13</i></div><div class="l7">37.3Ⓜ38.0⑤</div><div class="l8">オーロイプ2.0外</div><div class="l9"><b>良</b><b>平</b>後方まま</div><div class="l10">ブ盾GKハ</div><div class="l11">16ト 9 ⑬</div><div class="l12"><span>482</span><b>50</b><span>51<br>50</span></div></div>
<div><div class="l1">1/21 1小④</div><div class="l2">豊前S<small>3勝</small></div><div class="l3">モダ / -29</div><div class="l4">1439 <span class="ci">⑥</span></div><div class="l5">斎藤新<small> 58</small></div><div class="l6"><i>16</i><i>16</i><i>12</i><i>12</i></div><div class="l7">37.9Ⓜ37.5⑤</div><div class="l8">サンライズ1.7馬</div><div class="l9"><b>余</b><b>平</b>スタ悪</div><div class="l10">盾Hネ</div><div class="l11">16ト 14 ⑥</div><div class="l12"><span>496</span><b>48</b><span>62<br>62</span></div></div>
<div><div class="l1">12/17 5阪⑥</div><div class="l2">御影S<small>3勝</small></div><div class="l3">モダ / -9</div><div class="l4">1262 <span class="ci">⑫</span></div><div class="l5">藤懸貴<small> 56</small></div><div class="l6"><i style="background:#2233aa;color:#fff">1</i><i>16</i><i>16</i><i>16</i></div><div class="l7">36.3Ⓜ37.6⑥</div><div class="l8">エンペラー2.8馬</div><div class="l9"><b>良</b><b>平</b>スタ悪</div><div class="l10">盾Hネ</div><div class="l11">16ト 13 ⑮</div><div class="l12"><span>470</span><b class="o">38</b><span>50<br>53</span></div></div>
<div><div class="l1">9/24 4中⑦</div><div class="l2">内房S<small>3勝</small></div><div class="l3">天ダ / -7</div><div class="l4">1532 <span class="w" style="background:#3a9a4a">2</span></div><div class="l5">西村淳<small> 58</small></div><div class="l6"><i>2</i><i>2</i><i>2</i><i>2</i></div><div class="l7">37.2Ⓜ37.9⑦</div><div class="l8">ダノンマデ0.0外</div><div class="l9"><b>良</b><b>平</b>スタ良</div><div class="l10">盾EHネ</div><div class="l11">16ト 6 ②</div><div class="l12"><span>502</span><b>61</b><span>58<br>57</span></div></div>
<div><div class="l1">3/31 3中④</div><div class="l2">アリ<small>2勝</small></div><div class="l3">天ダ / -8</div><div class="l4">1538 <span class="ci">⑩</span></div><div class="l5">石川裕<small> 55</small></div><div class="l6"><i>8</i><i>8</i><i>8</i><i>8</i></div><div class="l7">37.8Ⓜ37.8⑤</div><div class="l8">ドライゼ0.7外</div><div class="l9"><b>良</b><b>平</b>直線不利</div><div class="l10">盾RGネ</div><div class="l11">16ト 9 ⑬</div><div class="l12"><span>506</span><b>53</b><span>55<br>61</span></div></div>
<div><div class="l1">3/2 2小①</div><div class="l2">早鞆特<small>2勝</small></div><div class="l3">モダ /-22</div><div class="l4">1445 <span class="ci">⑥</span></div><div class="l5">小沢大<small> 55</small></div><div class="l6"><i>3</i><i>3</i><i>3</i><i>3</i></div><div class="l7">36.0Ⓜ37.9⑥</div><div class="l8">アイファー0.8馬</div><div class="l9"><b>良</b><b>平</b>展開嵌</div><div class="l10">盾EHネ</div><div class="l11">16ト 9 ⑤</div><div class="l12"><span>456</span><b>52</b><span>57<br>59</span></div></div>
<div><div class="l1">2/10 1京⑤</div><div class="l2">2勝クラ<small>2勝</small></div><div class="l3">天ダ / -3</div><div class="l4">1383 <span class="ci">⑩</span></div><div class="l5">横山武<small> 55</small></div><div class="l6"><i>4</i><i>3</i><i>2</i><i>2</i></div><div class="l7">37.7Ⓜ37.6⑨</div><div class="l8">サルヴァト1.6馬</div><div class="l9"><b>良</b><b>平</b>振り気味</div><div class="l10">盾HEネ</div><div class="l11">16ト 9 ⑥</div><div class="l12"><span>492</span><b>44</b><span>51<br>58</span></div></div>
<div><div class="l1">3/16 1阪⑥</div><div class="l2">2勝クラ<small>2勝</small></div><div class="l3">天ダ / -4</div><div class="l4">1543 <span class="ci">④</span></div><div class="l5">ムルザ<small> 57</small></div><div class="l6"><i>7</i><i>7</i><i>6</i><i>5</i></div><div class="l7">38.6Ⓜ36.9⑤</div><div class="l8">ブメハヤ0.3外</div><div class="l9"><b>良</b><b>平</b>仕掛遅</div><div class="l10">盾RGネ</div><div class="l11">16ト 8 ⑧</div><div class="l12"><span>474</span><b>61</b><span>61<br>61</span></div></div>
<div><div class="l1">10/22 3京⑦</div><div class="l2">2勝クラ<small>2勝</small></div><div class="l3">天ダ / -1</div><div class="l4">1525 <span class="w" style="background:#c33">1</span></div><div class="l5">和田竜<small> 56</small></div><div class="l6"><i>5</i><i>4</i><i>6</i><i>5</i></div><div class="l7">37.0Ⓜ36.9⑤</div><div class="l8">メテオリ0.1内</div><div class="l9"><b>良</b><b>平</b>スタ良</div><div class="l10">盾RGネ</div><div class="l11">16ト 9 ③</div><div class="l12"><span>480</span><b>57</b><span>54<br>50</span></div></div>
<div><div class="l1">3/2 1阪③</div><div class="l2">なにわ<small>3勝</small></div><div class="l3">モダ / -8</div><div class="l4">1120 <span class="ci">⑧</span></div><div class="l5">田辺裕<small> 58</small></div><div class="l6"><i style="background:#2233aa;color:#fff">1</i><i>12</i><i>12</i><i>12</i></div><div class="l7">35.0Ⓜ36.1⑥</div><div class="l8">コパノパサ0.9外</div><div class="l9"><b>良</b><b>平</b>展開向</div><div class="l10">盾GHネ</div><div class="l11">16ト 8 ⑥</div><div class="l12"><span>502</span><b>48</b><span>52<br>54</span></div></div>
<div><div class="l1">11/11 3京③</div><div class="l2">観月橋<small>3勝</small></div><div class="l3">天ダ / -8</div><div class="l4">2014 <span class="ci">⑤</span></div><div class="l5">岩田望<small> 58</small></div><div class="l6"><i>8</i><i>7</i><i>6</i><i>7</i></div><div class="l7">36.8Ⓜ36.4⑥</div><div class="l8">セットリ1.5中</div><div class="l9"><b>良</b><b>平</b>スタ悪</div><div class="l10">盾Hネ</div><div class="l11">16ト 10 ⑥</div><div class="l12"><span>470</span><b>48</b><span>52<br>62</span></div></div>
<div><div class="l1">2/17 2小③</div><div class="l2">小倉城<small>3勝</small></div><div class="l3">モダ /-10</div><div class="l4">1452 <span class="ci">⑤</span></div><div class="l5">小崎綾<small> 56</small></div><div class="l6"><i>6</i><i>6</i><i>5</i><i>6</i></div><div class="l7">37.5Ⓜ37.6⑦</div><div class="l8">ブリンスミ0.5外</div><div class="l9"><b>良</b><b>平</b>大振り</div><div class="l10">Hネバ</div><div class="l11">16ト 10 ⑬</div><div class="l12"><span>526</span><b>56</b><span>56<br>56</span></div></div>
<div><div class="l1">12/17 5阪⑥</div><div class="l2">御影S<small>3勝</small></div><div class="l3">モダ / -9</div><div class="l4">1259 <span class="ci">⑩</span></div><div class="l5">川田将<small> 58</small></div><div class="l6"><i>12</i><i>11</i><i>10</i><i>10</i></div><div class="l7">36.5Ⓜ37.0⑨</div><div class="l8">エンペラー2.5馬</div><div class="l9"><b>良</b><b>平</b>スタ悪</div><div class="l10">盾EGネ</div><div class="l11">16ト 10 ⑤</div><div class="l12"><span>492</span><b>40</b><span>42<br>52</span></div></div>
<div><div class="l1">3/2 1阪③</div><div class="l2">なにわ<small>3勝</small></div><div class="l3">モダ / -8</div><div class="l4">1119 <span class="ci">⑦</span></div><div class="l5">田口貫<small> 58</small></div><div class="l6"><i>9</i><i>9</i><i>9</i><i>10</i></div><div class="l7">35.4Ⓜ36.5⑦</div><div class="l8">コパノバサ0.9内</div><div class="l9"><b>良</b><b>平</b>モタつく</div><div class="l10">盾Hネバ</div><div class="l11">16ト 4 ⑬</div><div class="l12"><span>476</span><b>52</b><span>57<br>65</span></div></div>
<div><div class="l1">5/26 3京⑫</div><div class="l2">與杼特<small>2勝</small></div><div class="l3">天ダ / -3</div><div class="l4">2003 <span class="ci">④</span></div><div class="l5">和田竜<small> 58</small></div><div class="l6"><i>4</i><i>4</i><i>3</i><i>2</i></div><div class="l7">36.8Ⓗ38.0⑥</div><div class="l8">ペプチドソ0.7中</div><div class="l9"><b>良</b><b>平</b>脚倒き△</div><div class="l10">盾GHネ</div><div class="l11">11ト 7 ⑤</div><div class="l12"><span>492</span><b>48</b><span>55<br>59</span></div></div></div>

<!-- RACES row 2 -->
<div class="row rc" style="top:1199px;height:174px">
<div><div class="l1">2/24 1阪②</div><div class="l2">伊丹S<small>3勝</small></div><div class="l3">天ダ / -4</div><div class="l4">1541 <span class="ci">⑫</span></div><div class="l5">秋山稔<small> 58</small></div><div class="l6"><i>8</i><i>8</i><i>6</i><i>6</i></div><div class="l7">38.6Ⓜ38.5⑪</div><div class="l8">サンデーフェ2.8馬</div><div class="l9"><b>良</b><b>平</b>行き脚</div><div class="l10">ブ盾Gネ</div><div class="l11">13ト 6 ⑫</div><div class="l12"><span>516</span><b>46</b><span>51<br>51</span></div></div>
<div><div class="l1">1/13 1中①</div><div class="l2">未 勝 利</div><div class="l3">障芝 / -8</div><div class="l4">3172 <span class="ci">⑩</span></div><div class="l5">高田潤<small> 60</small></div><div class="l6"><i>10</i><i>10</i><i>10</i><i>10</i></div><div class="l7">●</div><div class="l8">ペレクス 6.8馬</div><div class="l9"><b>良</b><b>平</b>飛越×</div><div class="l10">ブ盾Gネ</div><div class="l11">14ト 3 ⑩</div><div class="l12"><span>488</span><b class="o">40</b><span><br>40</span></div></div>
<div><div class="l1">3/17 1阪⑧</div><div class="l2">鳴門S<small>3勝</small></div><div class="l3">モダ / -4</div><div class="l4">1251 <span class="ci">⑤</span></div><div class="l5">ムルザ<small> 58</small></div><div class="l6"><i>9</i><i>8</i><i>8</i><i>9</i></div><div class="l7">35.7Ⓜ37.0⑦</div><div class="l8">ロードアク1.1馬</div><div class="l9"><b>良</b><b>平</b>スタ悪</div><div class="l10">盾Hネ</div><div class="l11">11ト 9 ⑧</div><div class="l12"><span>500</span><b>52</b><span>64<br>52</span></div></div>
<div><div class="l1">3/17 1阪⑧</div><div class="l2">鳴門S<small>3勝</small></div><div class="l3">モダ / -4</div><div class="l4">1254 <span class="ci">⑥</span></div><div class="l5">池添謙<small> 56</small></div><div class="l6"><i>14</i><i>15</i><i>12</i><i>13</i></div><div class="l7">35.6Ⓜ37.1⑦</div><div class="l8">ロードアク1.4馬</div><div class="l9"><b>良</b><b>平</b>スタ悪</div><div class="l10">盾Hネ</div><div class="l11">11ト 10 ⑭</div><div class="l12"><span>470</span><b>46</b><span>50<br>53</span></div></div>
<div><div class="l1">2/17 2京⑦</div><div class="l2">河原町<small>3勝</small></div><div class="l3">モダ / -6</div><div class="l4">1247 <span class="ci">⑥</span></div><div class="l5">武 豊<small> 58</small></div><div class="l6"><i>7</i><i>6</i><i>5</i><i>5</i></div><div class="l7">36.1Ⓜ37.1⑤</div><div class="l8">レディフォ0.9馬</div><div class="l9"><b>良</b><b>平</b>スタ悪</div><div class="l10">盾EHネ</div><div class="l11">16ト 6 ③</div><div class="l12"><span>500</span><b>52</b><span>58<br>54</span></div></div>
<div><div class="l1">4/27 1京③</div><div class="l2">三条<small>2勝</small></div><div class="l3">天ダ / -6</div><div class="l4">1536 <span class="ci">⑥</span></div><div class="l5">佐々木<small> 56</small></div><div class="l6"><i>5</i><i>4</i><i>4</i><i>4</i></div><div class="l7">37.0Ⓜ37.8⑤</div><div class="l8">エファフォ1.6馬</div><div class="l9"><b>良</b><b>平</b>スタ良</div><div class="l10">盾RGネ</div><div class="l11">13ト 11 ⑬</div><div class="l12"><span>496</span><b>48</b><span>55<br>63</span></div></div>
<div><div class="l1">6/8 3京①</div><div class="l2">2勝クラ<small>2勝</small></div><div class="l3">天ダ / -6</div><div class="l4">1531 <span class="ci">④</span></div><div class="l5">小沢大<small> 56</small></div><div class="l6"><i>3</i><i>3</i><i>3</i><i>3</i></div><div class="l7">36.6Ⓜ37.6⑤</div><div class="l8">テンカジョ0.6馬</div><div class="l9"><b>良</b><b>平</b>スタ良</div><div class="l10">盾EHネ</div><div class="l11">16ト 5 ⑦</div><div class="l12"><span>450</span><b>47</b><span>55<br>57</span></div></div>
<div><div class="l1">4/28 2東④</div><div class="l2">2勝クラ<small>2勝</small></div><div class="l3">天ダ / -7</div><div class="l4">1234 <span class="w" style="background:#c33">1</span></div><div class="l5">永島ま<small> 54</small></div><div class="l6"><i>2</i><i>2</i><i>2</i><i>2</i></div><div class="l7">35.3Ⓜ37.3①</div><div class="l8">マウントベ0.5外</div><div class="l9"><b>良</b><b>平</b>スタ良</div><div class="l10">盾HEネ</div><div class="l11">16ト 8 ⑦</div><div class="l12"><span>490</span><b>61</b><span>61<br>65</span></div></div>
<div><div class="l1">5/5 1新④</div><div class="l2">咲花<small>2勝</small></div><div class="l3">天ダ / -8</div><div class="l4">1535 <span class="w" style="background:#c33">1</span></div><div class="l5">佐々木<small> 56</small></div><div class="l6"><i>4</i><i>4</i><i>4</i><i>4</i></div><div class="l7">37.4Ⓜ37.4⑩</div><div class="l8">クリニクラ0.0中</div><div class="l9"><b>良</b><b>平</b>スタ良</div><div class="l10">盾RGネ</div><div class="l11">15ト 8 ⑦</div><div class="l12"><span>484</span><b>56</b><span>58<br>50</span></div></div>
<div><div class="l1">5/26 3京⑧</div><div class="l2">北山S<small>3勝</small></div><div class="l3">天ダ / -6</div><div class="l4">1529 <span class="ci">⑦</span></div><div class="l5">古川吉<small> 58</small></div><div class="l6"><i>5</i><i>5</i><i>4</i><i>4</i></div><div class="l7">37.2Ⓜ37.3⑥</div><div class="l8">ゴーゴー0.9馬</div><div class="l9"><b>良</b><b>平</b>スタ良</div><div class="l10">盾RGネ</div><div class="l11">16ト 10 ⑨</div><div class="l12"><span>478</span><b>57</b><span>59<br>55</span></div></div>
<div><div class="l1">5/4 2東③</div><div class="l2">鎌倉S<small>3勝</small></div><div class="l3">モダ / -5</div><div class="l4">1260 <span class="ci">⑩</span></div><div class="l5">吉田豊<small> 58</small></div><div class="l6"><i>15</i><i>14</i><i>14</i><i>14</i></div><div class="l7">35.1Ⓜ36.9⑤</div><div class="l8">コパノニコ2.5馬</div><div class="l9"><b>良</b><b>平</b>スタ悪</div><div class="l10">盾RGネ</div><div class="l11">16ト 9 ⑨</div><div class="l12"><span>504</span><b>58</b><span>55<br>55</span></div></div>
<div><div class="l1">3/31 3中④</div><div class="l2">アリ<small>2勝</small></div><div class="l3">天ダ / -8</div><div class="l4">1532 <span class="ci">⑤</span></div><div class="l5">松岡正<small> 56</small></div><div class="l6"><i>10</i><i>10</i><i>9</i><i>8</i></div><div class="l7">38.2Ⓜ37.1⑧</div><div class="l8">ドライゼ0.1外</div><div class="l9"><b>良</b><b>平</b>スタ良</div><div class="l10">盾RGネ</div><div class="l11">16ト 13 ⑦</div><div class="l12"><span>476</span><b>43</b><span>50<br>57</span></div></div>
<div><div class="l1">5/4 2東④</div><div class="l2">是政S<small>3勝</small></div><div class="l3">天ダ / -8</div><div class="l4">2127 <span class="ci">⑮</span></div><div class="l5">菅原明<small> 58</small></div><div class="l6"><i>7</i><i>5</i><i>5</i><i>6</i></div><div class="l7">36.6Ⓜ38.2⑥</div><div class="l8">メイプルリ3.3馬</div><div class="l9"><b>良</b><b>平</b>追走一杯</div><div class="l10">Hネバ</div><div class="l11">16ト 9 ⑪</div><div class="l12"><span>528</span><b>41</b><span>51<br>47</span></div></div>
<div><div class="l1">2/3 2京③</div><div class="l2">櫃原S<small>3勝</small></div><div class="l3">モダ / -6</div><div class="l4">1127 <span class="ci">⑤</span></div><div class="l5">菱田裕<small> 58</small></div><div class="l6"><i>13</i><i>11</i><i>11</i><i>11</i></div><div class="l7">35.8Ⓜ37.1⑤</div><div class="l8">ドンアミテ1.9外</div><div class="l9"><b>良</b><b>平</b>スタ悪</div><div class="l10">盾EGネ</div><div class="l11">16ト 14 ⑬</div><div class="l12"><span>490</span><b>43</b><span>44<br>54</span></div></div>
<div><div class="l1">5/4 2東③</div><div class="l2">鎌倉S<small>3勝</small></div><div class="l3">モダ / -8</div><div class="l4">1254 <span class="ci">⑨</span></div><div class="l5">松岡正<small> 58</small></div><div class="l6"><i>9</i><i>9</i><i>8</i><i>8</i></div><div class="l7">35.9Ⓜ37.4⑤</div><div class="l8">コパノニコ1.6馬</div><div class="l9"><b>良</b><b>平</b>スタ悪</div><div class="l10">盾EGネ</div><div class="l11">16ト 10 ⑧</div><div class="l12"><span>476</span><b>46</b><span>44<br>63</span></div></div>
<div><div class="l1">6/1 4京①</div><div class="l2">若狭湾<small>2勝</small></div><div class="l3">天ダ /-11</div><div class="l4">1535 <span class="w" style="background:#c33">1</span></div><div class="l5">田口貫<small> 58</small></div><div class="l6"><i>4</i><i>2</i><i>2</i><i>2</i></div><div class="l7">36.3Ⓜ37.4⑤</div><div class="l8">サンライズ0.1馬</div><div class="l9"><b>良</b><b>平</b>スタ良</div><div class="l10">盾RGネ</div><div class="l11">16ト 8 ①</div><div class="l12"><span>486</span><b>57</b><span>57<br>58</span></div></div></div>

<!-- RACES row 1 -->
<div class="row rc" style="top:1373px;height:175px">
<div><div class="l1">4/13 3中⑤</div><div class="l2">下総S<small>3勝</small></div><div class="l3">天ダ /-18</div><div class="l4">1531 <span class="ci">⑫</span></div><div class="l5">長岡禎<small> 58</small></div><div class="l6"><i>8</i><i>8</i><i>6</i><i>6</i></div><div class="l7">38.7Ⓜ37.6⑤</div><div class="l8">アクション1.4馬</div><div class="l9"><b>良</b><b>平</b>向詰×</div><div class="l10">盾臀Gネバ</div><div class="l11">14ト 12 ⑫</div><div class="l12"><span>510</span><b>54</b><span>51<br>47</span></div></div>
<div><div class="l1">5/19 2東⑩</div><div class="l2">エアグ<small>3勝</small></div><div class="l3">天ダ /-15</div><div class="l4">2114 <span class="ci">⑧</span></div><div class="l5">オシエ<small> 55</small></div><div class="l6"><i>8</i><i>8</i><i>9</i><i>9</i></div><div class="l7">39.1Ⓜ36.9⑧</div><div class="l8">ブラックサ1.1馬</div><div class="l9"><b>良</b><b>平</b>手前替×</div><div class="l10">ブ盾Gネバ</div><div class="l11">16ト 7 ⑪</div><div class="l12"><span>500</span><b>52</b><span>58<br>50</span></div></div>
<div><div class="l1">5/26 2京⑫</div><div class="l2">ディー<small>3勝</small></div><div class="l3">モダ / -9</div><div class="l4">1364 <span class="ci">⑥</span></div><div class="l5">西村淳<small> 58</small></div><div class="l6"><i>8</i><i>8</i><i>6</i><i>5</i></div><div class="l7">36.2Ⓜ36.5⑦</div><div class="l8">ドゥラレジ0.5馬</div><div class="l9"><b>余</b><b>不</b>展開待ち</div><div class="l10">盾ネバ</div><div class="l11">16ト 15 ⑩</div><div class="l12"><span>500</span><b>54</b><span>50<br>59</span></div></div>
<div><div class="l1">4/20 2東⑤</div><div class="l2">湘南S<small>3勝</small></div><div class="l3">モダ /-33</div><div class="l4">1216 <span class="ci">⑧</span></div><div class="l5">木幡巧<small> 54</small></div><div class="l6"><i>13</i><i>14</i><i>15</i><i>15</i></div><div class="l7">35.0Ⓜ37.5⑤</div><div class="l8">リジール1.1馬</div><div class="l9"><b>良</b><b>不</b>スタ悪い</div><div class="l10">盾H舌ネ</div><div class="l11">18ト 9 ⑰</div><div class="l12"><span>466</span><b class="o">41</b><span>49<br>56</span></div></div>
<div><div class="l1">6/30 3小②</div><div class="l2">薩摩S<small>3勝</small></div><div class="l3">モダ /-19</div><div class="l4">1437 <span class="ci">⑦</span></div><div class="l5">西村淳<small> 58</small></div><div class="l6"><i>5</i><i>6</i><i>5</i><i>5</i></div><div class="l7">36.3Ⓜ37.6⑤</div><div class="l8">リジール1.1馬</div><div class="l9"><b>余</b><b>平</b>ラフ辞</div><div class="l10">盾ネ</div><div class="l11">16ト 4 ⑧</div><div class="l12"><span>496</span><b>52</b><span>54<br>50</span></div></div>
<div><div class="l1">5/26 2京⑫</div><div class="l2">ディー<small>3勝</small></div><div class="l3">モダ / -9</div><div class="l4">1371 <span class="ci">⑩</span></div><div class="l5">石橋脩<small> 58</small></div><div class="l6"><i>2</i><i>2</i><i>2</i><i>2</i></div><div class="l7">35.9Ⓜ37.6⑤</div><div class="l8">ドゥラレジ1.2馬</div><div class="l9"><b>余</b><b>不</b>スタ悪い</div><div class="l10">盾RGネ</div><div class="l11">16ト 1 ⑮</div><div class="l12"><span>506</span><b>47</b><span>59<br>58</span></div></div>
<div><div class="l1">6/16 3小④</div><div class="l2">熊本城<small>3勝</small></div><div class="l3">モダ /-18</div><div class="l4">1435 <span class="w" style="background:#c33">1</span></div><div class="l5">小沢大<small> 56</small></div><div class="l6"><i>3</i><i>3</i><i>3</i><i>2</i></div><div class="l7">36.3Ⓜ37.2②</div><div class="l8">スカイロケ0.0馬</div><div class="l9"><b>良</b><b>平</b>R振スム</div><div class="l10">盾Hネ</div><div class="l11">16ト 11 ②</div><div class="l12"><span>452</span><b>56</b><span>52<br>56</span></div></div>
<div><div class="l1">6/2 3京②</div><div class="l2">高瀬川<small>3勝</small></div><div class="l3">モダ / -2</div><div class="l4">1243 <span class="ci">⑤</span></div><div class="l5">団野大<small> 56</small></div><div class="l6"><i>3</i><i>3</i><i>3</i><i>3</i></div><div class="l7">35.7Ⓜ37.0⑤</div><div class="l8">ロードラ0.5馬</div><div class="l9"><b>良</b><b>牙</b>減量効○</div><div class="l10">盾臀Hネ</div><div class="l11">16ト 11 ⑥</div><div class="l12"><span>496</span><b>56</b><span>55<br>66</span></div></div>
<div><div class="l1">5/25 3京⑦</div><div class="l2">桃山S<small>3勝</small></div><div class="l3">天ダ / -3</div><div class="l4">1598 <span class="ci">⑤</span></div><div class="l5">池添謙<small> 58</small></div><div class="l6"><i>5</i><i>6</i><i>6</i><i>6</i></div><div class="l7">37.4Ⓜ37.2⑤</div><div class="l8">スタイル0.7馬</div><div class="l9"><b>良</b><b>平</b>勝負でき</div><div class="l10">盾ネバ</div><div class="l11">16ト 8 ④</div><div class="l12"><span>494</span><b>50</b><span>56<br>58</span></div></div>
<div><div class="l1">3/31 3中④</div><div class="l2">アリ<small>2勝</small></div><div class="l3">天ダ / -18</div><div class="l4">1538 <span class="ci">⑩</span></div><div class="l5">古川吉<small> 58</small></div><div class="l6"><i>5</i><i>6</i><i>7</i><i>7</i></div><div class="l7">36.8Ⓜ37.4⑩</div><div class="l8">ドライゼ0.7馬</div><div class="l9"><b>良</b><b>平</b>スタ悪い</div><div class="l10">盾RGネ</div><div class="l11">16ト 8 ⑩</div><div class="l12"><span>478</span><b>53</b><span>52<br>47</span></div></div>
<div><div class="l1">6/23 4京⑧</div><div class="l2">サイS<small>3勝</small></div><div class="l3">モダ / -8</div><div class="l4">1234 <span class="w" style="background:#2233aa">3</span></div><div class="l5">鮫島良<small> 58</small></div><div class="l6"><i>9</i><i>8</i><i>8</i><i>8</i></div><div class="l7">35.1Ⓜ35.2⑤</div><div class="l8">ライツフ0.1中</div><div class="l9"><b>良</b><b>平</b>スタ悪い</div><div class="l10">盾ネ</div><div class="l11">15ト 14 ⑪</div><div class="l12"><span>484</span><b>58</b><span>62<br>63</span></div></div>
<div><div class="l1">11/11 3京③</div><div class="l2">観月橋<small>3勝</small></div><div class="l3">天ダ / -8</div><div class="l4">2013 <span class="ci">⑨</span></div><div class="l5">幸英明<small> 58</small></div><div class="l6"><i>9</i><i>8</i><i>8</i><i>8</i></div><div class="l7">36.1Ⓜ37.2⑤</div><div class="l8">エクセス1.2馬</div><div class="l9"><b>良</b><b>平</b>ラフラフ</div><div class="l10">ブ盾R</div><div class="l11">12ト 10 ⑩</div><div class="l12"><span>496</span><b>44</b><span>61<br>61</span></div></div>
<div><div class="l1">5/25 3京⑦</div><div class="l2">桃山S<small>3勝</small></div><div class="l3">天ダ / -3</div><div class="l4">2010 <span class="ci">⑬</span></div><div class="l5">小崎綾<small> 58</small></div><div class="l6"><i>8</i><i>7</i><i>7</i><i>7</i></div><div class="l7">37.0Ⓜ37.8⑦</div><div class="l8">スタイル1.6馬</div><div class="l9"><b>余</b><b>平</b>追い通し</div><div class="l10">盾Hネバ</div><div class="l11">16ト 9 ⑯</div><div class="l12"><span>522</span><b>41</b><span>48<br>57</span></div></div>
<div><div class="l1">3/2 1阪③</div><div class="l2">なにわ<small>3勝</small></div><div class="l3">モダ / -8</div><div class="l4">1126 <span class="ci">⑫</span></div><div class="l5">岩田康<small> 58</small></div><div class="l6"><i>12</i><i>12</i><i>12</i><i>12</i></div><div class="l7">35.5Ⓜ36.9⑤</div><div class="l8">コパノパサ1.6馬</div><div class="l9"><b>良</b><b>平</b>後方まま</div><div class="l10">盾臀EGネ</div><div class="l11">16ト 14 ⑯</div><div class="l12"><span>486</span><b>45</b><span>53<br>54</span></div></div>
<div><div class="l1">6/9 3京④</div><div class="l2">渡月橋<small>3勝</small></div><div class="l3">モダ /-28</div><div class="l4">1211 <span class="ci">⑫</span></div><div class="l5">田口貫<small> 58</small></div><div class="l6"><i>7</i><i>6</i><i>6</i><i>6</i></div><div class="l7">35.3Ⓜ35.8⑤</div><div class="l8">サトノバル1.5馬</div><div class="l9"><b>余</b><b>平</b>流れ向</div><div class="l10">盾Hネバ</div><div class="l11">16ト 16 ⑮</div><div class="l12"><span>468</span><b class="o">48</b><span>48<br>58</span></div></div>
<div><div class="l1">6/30 3小②</div><div class="l2">薩摩S<small>3勝</small></div><div class="l3">モダ /-19</div><div class="l4">1427 <span class="w" style="background:#3a9a4a">2</span></div><div class="l5">田口貫<small> 58</small></div><div class="l6"><i>1</i><i>1</i><i>1</i><i>1</i></div><div class="l7">35.3Ⓜ37.4②</div><div class="l8">リジール0.0馬</div><div class="l9"><b>良</b><b>平</b>大外回る</div><div class="l10">盾Hネ</div><div class="l11">16ト 2 ⑥</div><div class="l12"><span>490</span><b>61</b><span>60<br>57</span></div></div></div>

<!-- bottom 全成績 -->
<div class="row zs" style="top:1548px;height:63px">
<div><span>全<br>3<br>3<br>5<br>25</span><span>全<br>右<br>3<br>3<br>21</span><span>名<br>ダ<br>0<br>2<br>2</span><span>小<br>ダ<br>0<br>0<br>3</span></div>
<div><span>全<br>3<br>1<br>0<br>9</span><span>全<br>右<br>1<br>0<br>4</span><span>名<br>ダ<br>0<br>0<br>1</span><span>小<br>ダ<br>0<br>0<br>0</span></div>
<div><span>全<br>3<br>0<br>3<br>13</span><span>全<br>右<br>3<br>2<br>8</span><span>名<br>ダ<br>0<br>0<br>3</span><span>小<br>ダ<br>2<br>0<br>2</span></div>
<div><span>全<br>3<br>2<br>0<br>14</span><span>全<br>右<br>3<br>1<br>10</span><span>名<br>ダ<br>0<br>1<br>1</span><span>小<br>ダ<br>0<br>0<br>0</span></div>
<div><span>全<br>3<br>5<br>3<br>18</span><span>全<br>右<br>1<br>4<br>9</span><span>名<br>ダ<br>2<br>1<br>5</span><span>小<br>ダ<br>0<br>3<br>1</span></div>
<div><span>全<br>3<br>6<br>5<br>15</span><span>全<br>右<br>3<br>3<br>9</span><span>名<br>ダ<br>0<br>3<br>3</span><span>小<br>ダ<br>3<br>1<br>1</span></div>
<div><span>全<br>3<br>5<br>2<br>10</span><span>全<br>右<br>3<br>5<br>9</span><span>名<br>ダ<br>0<br>0<br>0</span><span>小<br>ダ<br>2<br>2<br>2</span></div>
<div><span>全<br>3<br>3<br>5<br>5</span><span>全<br>右<br>0<br>3<br>2</span><span>名<br>ダ<br>2<br>1<br>1</span><span>小<br>ダ<br>0<br>2<br>1</span></div>
<div><span>全<br>3<br>6<br>0<br>5</span><span>全<br>右<br>2<br>3<br>3</span><span>名<br>ダ<br>0<br>3<br>1</span><span>小<br>ダ<br>1<br>0<br>1</span></div>
<div><span>全<br>3<br>0<br>1<br>6</span><span>全<br>右<br>2<br>0<br>5</span><span>名<br>ダ<br>1<br>0<br>1</span><span>小<br>ダ<br>0<br>0<br>0</span></div>
<div><span>全<br>3<br>1<br>2<br>15</span><span>全<br>右<br>2<br>0<br>11</span><span>名<br>ダ<br>1<br>1<br>3</span><span>小<br>ダ<br>0<br>0<br>0</span></div>
<div><span>全<br>3<br>1<br>1<br>17</span><span>全<br>右<br>3<br>1<br>13</span><span>名<br>ダ<br>0<br>0<br>3</span><span>小<br>ダ<br>2<br>0<br>2</span></div>
<div><span>全<br>4<br>1<br>1<br>16</span><span>全<br>右<br>1<br>1<br>11</span><span>名<br>ダ<br>2<br>0<br>1</span><span>小<br>ダ<br>1<br>1<br>4</span></div>
<div><span>全<br>3<br>3<br>1<br>15</span><span>全<br>右<br>2<br>0<br>10</span><span>名<br>ダ<br>1<br>2<br>4</span><span>小<br>ダ<br>0<br>0<br>0</span></div>
<div><span>全<br>3<br>5<br>4<br>17</span><span>全<br>右<br>2<br>3<br>10</span><span>名<br>ダ<br>1<br>1<br>3</span><span>小<br>ダ<br>0<br>2<br>0</span></div>
<div><span>全<br>3<br>1<br>1<br>9</span><span>全<br>右<br>3<br>1<br>6</span><span>名<br>ダ<br>0<br>0<br>0</span><span>小<br>ダ<br>0<br>1<br>1</span></div></div>
<div class="row dk" style="top:1611px;height:14px"><div>1012</div><div>0000</div><div>0002</div><div>0102</div><div>1004</div><div>1002</div><div>1100</div><div>0011</div><div>0200</div><div>0002</div><div>0022</div><div>1012</div><div>0102</div><div>0102</div><div>1001</div><div>1100</div></div>
<div class="row cl" style="top:1625px;height:13px"><div>00116</div><div>0005</div><div>0005</div><div>0009</div><div>02111</div><div>0003</div><div>0000</div><div>0001</div><div>0001</div><div>0002</div><div>0119</div><div>0007</div><div>01112</div><div>0209</div><div>02112</div><div>0100</div></div>
<div class="row hn" style="top:1638px;height:14px;border-bottom:none"><div>⑯モズマゾク</div><div>⑮ジューンア</div><div>⑭ビオグラフ</div><div>⑬クレスコジ</div><div>⑫メイショウ</div><div>⑪ラニカイ</div><div>⑩メイショウ</div><div>⑨エピックジ</div><div>⑧オシゲ</div><div>⑦ガウラ</div><div>⑥テイエムラ</div><div>⑤コンスタン</div><div>④ハンディー</div><div>③ランドボル</div><div>②タイセイシ</div><div>①メイショウ</div></div>

<!-- LABEL COLUMN -->
<div class="lab" style="top:73px;height:18px;font-size:13px;line-height:18px;font-weight:bold">枠番</div>
<div class="lab" style="top:91px;height:19px;font-size:13px;line-height:19px;font-weight:bold">馬番</div>
<div class="lab" style="top:110px;height:197px;font-size:13px">
<div style="font-size:10px;line-height:12px">馬記号</div>
<div style="display:flex;justify-content:space-between;padding:0 12px;line-height:18px"><span>母</span><span>馬</span><span>父</span></div>
<div style="display:flex;justify-content:space-between;padding:0 12px;line-height:18px"><span>母</span><span>名</span><span>父</span></div>
<div style="display:flex;justify-content:space-between;padding:0 12px;line-height:14px"><span>父</span><span></span><span>父</span></div>
<div style="writing-mode:vertical-rl;margin:30px auto 0;font-size:11px;font-weight:bold;height:60px">（激走馬印）</div>
<div style="display:flex;justify-content:space-between;padding:0 10px;line-height:16px;margin-top:-20px"><span>性<br>齢</span><span>毛<br>色</span></div></div>
<div class="lab" style="top:307px;height:33px;font-size:8px;line-height:10px">乗替　斤量 ブリンカー<br><span style="font-size:12px;line-height:12px">騎手名</span><br>本年勝利数と順位</div>
<div class="lab" style="top:340px;height:28px;font-size:8px;line-height:12px"><span style="font-size:12px">厩舎 [ 所属 ]</span><br>本年勝利数と順位</div>
<div class="lab" style="top:368px;height:17px;font-size:8px;line-height:17px">放牧先 [ 帰厩後何走目 ] ランク</div>
<div class="lab" style="top:385px;height:17px;font-size:9px;line-height:17px">間隔 / 厩舎指数</div>
<div class="lab" style="top:402px;height:17px;font-size:9px;line-height:17px">調教指数 / 調教評価</div>
<div class="lab" style="top:419px;height:15px;font-size:8px;line-height:15px">情報専門紙 [◎,○,▲,△]</div>
<div class="a" style="left:952px;top:434px;width:21px;height:416px;background:#555;color:#fff;writing-mode:vertical-rl;font-size:13px;font-weight:bold;text-align:center;padding-top:40px;letter-spacing:2px">過去成績集計</div>
<div class="lab" style="left:973px;width:95px;top:434px;height:17px;background:#000;color:#fff;font-size:12px;font-weight:bold;line-height:17px;letter-spacing:4px">IDM</div>
<div class="lab" style="left:973px;width:95px;top:451px;height:47px;font-size:11px;line-height:15px;text-align:left;padding-left:4px"><div style="text-align:center">情報</div>追切 展開<br>仕上 <b style="font-size:14px">本紙</b></div>
<div class="lab" style="left:973px;width:95px;top:498px;height:17px;font-size:11px;line-height:17px">基準単 ( 人気 )</div>
<div class="lab" style="left:973px;width:95px;top:515px;height:15px;font-size:11px;line-height:15px">基準複 ( 人気 )</div>
<div class="lab" style="left:973px;width:95px;top:530px;height:55px;font-size:11px;line-height:15px;padding-top:10px">距離別の<br>競走成績</div>
<div class="lab" style="left:973px;width:95px;top:585px;height:65px;font-size:8px;line-height:10px;padding-top:2px"><span style="font-size:10px">距離別の<br>最高 I D M</span><br>I D M<br>競馬場<br>着順<br>記録時期</div>
<div class="lab" style="left:973px;width:95px;top:650px;height:13px;font-size:8px;line-height:13px">当該コース成績</div>
<div class="lab" style="left:973px;width:95px;top:663px;height:27px;font-size:6px;line-height:9px">当該コース最高IDM、ペース<br>着順、タイム<br>記録時期</div>
<div class="lab" style="left:973px;width:95px;top:690px;height:13px;font-size:7px;line-height:13px">持ち時計 / 当該コース時計</div>
<div class="lab" style="left:973px;width:95px;top:703px;height:14px;font-size:8px;line-height:14px">出遅率 (%) 連対率 (%)</div>
<div class="lab" style="left:973px;width:95px;top:717px;height:13px;font-size:8px;line-height:13px">馬 × 騎手成績</div>
<div class="lab" style="left:973px;width:95px;top:730px;height:12px;font-size:10px;line-height:12px">脚質</div>
<div class="lab" style="left:973px;width:95px;top:742px;height:12px;font-size:10px;line-height:12px">適距離</div>
<div class="lab" style="left:973px;width:95px;top:754px;height:12px;font-size:10px;line-height:12px">蹄 / 重適性</div>
<div class="lab" style="left:973px;width:95px;top:766px;height:12px;font-size:10px;line-height:12px">繋</div>
<div class="lab" style="left:973px;width:95px;top:778px;height:12px;font-size:10px;line-height:12px">体型</div>
<div class="lab" style="left:973px;width:95px;top:790px;height:12px;font-size:10px;line-height:12px">馬主</div>
<div class="lab" style="left:973px;width:95px;top:802px;height:12px;font-size:10px;line-height:12px">生産者</div>
<div class="lab" style="left:973px;width:95px;top:814px;height:12px;font-size:10px;line-height:12px">獲得賞金</div>
<div class="lab" style="left:973px;width:95px;top:826px;height:24px;font-size:10px;line-height:12px">収得賞金</div>

<div class="a" style="left:952px;top:850px;width:21px;height:698px;background:#555;color:#fff;font-size:14px;font-weight:bold;text-align:center">
<div style="position:absolute;top:55px;width:21px;line-height:24px">4<br>走<br>前</div>
<div style="position:absolute;top:174px;width:21px;border-top:1px solid #888"></div>
<div style="position:absolute;top:230px;width:21px;line-height:24px">3<br>走<br>前</div>
<div style="position:absolute;top:348px;width:21px;border-top:1px solid #888"></div>
<div style="position:absolute;top:405px;width:21px;line-height:24px">2<br>走<br>前</div>
<div style="position:absolute;top:522px;width:21px;border-top:1px solid #888"></div>
<div style="position:absolute;top:580px;width:21px;line-height:24px">1<br>走<br>前</div></div>
<div class="lab" style="left:973px;width:95px;top:850px;height:698px;background:#c4c4c4">
<div style="background:#000;color:#fff;font-size:11px;line-height:14px;padding:2px 0">競走成績欄の<br>説明</div>
<div class="ex"><b>[1行目]</b>開催日 / 回場日<b>[2行目]</b>レース名 / クラス<b>[3行目]</b>距離コース / 馬場差<b>[4行目]</b>タイム / 着順<b>[5行目]</b>騎手 / 斤量<b>[6行目]</b>コーナー順位<br>1角,2角,3角,4角<br><span style="font-size:8px">出遅れデータを1角に表します。(例)<br>❷ :2馬身出遅れ</span><b>[7行目]</b>前3F/ペース/後3F<b>[8行目]</b>勝馬(または2着馬)<br>着差 / 直線位置取り<b>[9行目]</b>馬体 / 気配 / 特記<b>[10行目]</b>馬具 / 脚元<b>[11行目]</b>頭数 / 枠 / 人気<b>[12行目]</b>馬体重 / パドック点<br>IDM<br>(上) 追切指数<br>(下) 仕上指数<br><br><span style="background:#000;color:#fff">IDM</span>の白抜数字は<br>ダート戦</div></div>
<div class="a" style="left:952px;top:1548px;width:21px;height:63px;background:#bbb;font-size:11px;font-weight:bold;writing-mode:vertical-rl;text-align:center;line-height:21px;padding-top:8px;border-left:1px solid #777">全成績</div>
<div class="lab" style="left:973px;width:95px;top:1548px;height:63px;font-size:12px;line-height:15px;padding-top:8px">競馬場別成績<br><span style="font-size:9px">(芝・ダ・障別)</span><br><br>回り別成績</div>
<div class="lab" style="top:1611px;height:14px;background:#555;color:#fff;font-size:11px;line-height:14px">重・不良成績</div>
<div class="lab" style="top:1625px;height:13px;font-size:11px;line-height:13px">クラス別成績</div>
<div class="lab" style="top:1638px;height:14px;font-size:11px;line-height:14px;border-bottom:none">馬番 / 馬名</div>

<!-- RIGHT PANEL -->
<div class="a" style="left:1068px;top:73px;width:115px;height:1579px;border-left:1px solid #777"></div>
<div class="a" style="left:1098px;top:88px;width:56px;height:16px;border:1px solid #333;background:#eee;font-size:11px;font-weight:bold;text-align:center;line-height:14px">展開予想</div>
<div class="a" style="left:1068px;top:107px;width:115px;font-size:10px;text-align:center;font-weight:bold">予想ペース <span style="font-size:13px">H</span></div>
<div class="a" style="left:1068px;top:123px;width:115px;font-size:11px;text-align:center;font-weight:bold">ゴール図</div>
<div class="a" style="left:1083px;top:140px;width:87px;height:360px;border:1px solid #999;background:#fff"></div>
<div class="a" style="left:1083px;top:141px;width:87px;height:40px;border-bottom:1px solid #ccc;font-size:10px;font-weight:bold;display:flex;justify-content:space-around;text-align:center;line-height:11px"><span>○<br>大<br>外</span><span>○<br>外</span><span>○<br>中</span><span>○<br>内<br>↑</span><span>○<br>最<br>内</span></div>
<div class="scale" style="left:1170px;top:140px;height:360px;padding-top:4px">差<br>0<br>1<br>2<br>3<br>4<br>5<br>6<br>7<br>8<br>9<br>0<br>1<br>2<br>3<br>4<br>5<br>6<br>7<br>8<br>9<br>0<br>1<br>2<br>3<br>4<br>5</div>
<div class="mk c1" style="left:1101px;top:181px">1</div><div class="mk c5" style="left:1154px;top:193px">10</div><div class="mk c4" style="left:1136px;top:218px">7</div><div class="mk c5" style="left:1119px;top:254px">9</div><div class="mk c4" style="left:1101px;top:266px">8</div><div class="mk c6" style="left:1154px;top:266px">11</div><div class="mk c3" style="left:1119px;top:278px">6</div><div class="mk c8" style="left:1085px;top:290px">16</div><div class="mk c7" style="left:1101px;top:290px">14</div><div class="mk c3" style="left:1136px;top:314px">5</div><div class="mk c6" style="left:1101px;top:340px">12</div><div class="mk c8" style="left:1119px;top:352px">15</div><div class="mk c2" style="left:1136px;top:352px">4</div><div class="mk c1" style="left:1154px;top:376px">2</div><div class="mk c2" style="left:1154px;top:412px">3</div>
<div class="a" style="left:1068px;top:502px;width:115px;font-size:11px;text-align:center;font-weight:bold">残り３Ｆ図</div>
<div class="a" style="left:1083px;top:518px;width:87px;height:359px;border:1px solid #999;background:#fff"></div>
<div class="a" style="left:1083px;top:519px;width:87px;height:32px;border-bottom:1px solid #ccc;font-size:10px;font-weight:bold;display:flex;justify-content:space-around;text-align:center;line-height:11px;padding-top:4px"><span>大<br>外</span><span>外</span><span>中</span><span>内<br>↑</span><span>最<br>内</span></div>
<div class="scale" style="left:1170px;top:518px;height:359px;padding-top:4px">差<br>0<br>1<br>2<br>3<br>4<br>5<br>6<br>7<br>8<br>9<br>0<br>1<br>2<br>3<br>4<br>5<br>6<br>7<br>8<br>9<br>0<br>1<br>2<br>3<br>4<br>5</div>
<div class="mk c5" style="left:1154px;top:556px">10</div><div class="mk c5" style="left:1119px;top:583px">9</div><div class="mk c3" style="left:1136px;top:583px">5</div><div class="mk c1" style="left:1154px;top:583px">2</div><div class="mk c6" style="left:1101px;top:595px">12</div><div class="mk c6" style="left:1154px;top:610px">11</div><div class="mk c4" style="left:1119px;top:610px">8</div><div class="mk c4" style="left:1136px;top:622px">7</div><div class="mk c7" style="left:1101px;top:634px">13</div><div class="mk c3" style="left:1119px;top:640px">6</div><div class="mk c2" style="left:1154px;top:640px">3</div><div class="mk c1" style="left:1136px;top:650px">1</div><div class="mk c8" style="left:1119px;top:666px">15</div><div class="mk c2" style="left:1154px;top:666px">4</div><div class="mk c7" style="left:1101px;top:696px">14</div><div class="mk c8" style="left:1119px;top:696px">16</div>
<div class="a" style="left:1068px;top:880px;width:115px;font-size:11px;text-align:center;font-weight:bold">道中図</div>
<div class="a" style="left:1083px;top:895px;width:87px;height:358px;border:1px solid #999;background:#fff"></div>
<div class="a" style="left:1083px;top:896px;width:87px;height:35px;border-bottom:1px solid #ccc;font-size:10px;font-weight:bold;display:flex;justify-content:space-around;text-align:center;line-height:11px;padding:12px 6px 0 20px"><span>外</span><span>中</span><span>内<br>↑</span></div>
<div class="scale" style="left:1170px;top:895px;height:358px;line-height:12.3px;padding-top:4px">差<br>0<br>1<br>2<br>3<br>4<br>5<br>6<br>7<br>8<br>9<br>0<br>1<br>2<br>3<br>4<br>5<br>6<br>7<br>8<br>9<br>0<br>(<br>1<br>=<br>半<br>馬<br>身<br>)</div>
<div class="mk c1" style="left:1154px;top:933px">2</div><div class="mk c5" style="left:1119px;top:945px">9</div><div class="mk c3" style="left:1136px;top:945px">5</div><div class="mk c5" style="left:1154px;top:957px">10</div><div class="mk c6" style="left:1154px;top:982px">11</div><div class="mk c4" style="left:1136px;top:994px">7</div><div class="mk c2" style="left:1154px;top:1006px">3</div><div class="mk c6" style="left:1119px;top:1018px">12</div><div class="mk c4" style="left:1136px;top:1018px">8</div><div class="mk c7" style="left:1119px;top:1043px">13</div><div class="mk c3" style="left:1136px;top:1043px">6</div><div class="mk c1" style="left:1154px;top:1043px">1</div><div class="mk c8" style="left:1136px;top:1068px">15</div><div class="mk c2" style="left:1154px;top:1080px">4</div><div class="mk c7" style="left:1136px;top:1093px">14</div><div class="mk c8" style="left:1154px;top:1130px">16</div>

<div class="a" style="left:15px;top:1655px;width:1168px;font-size:10.5px;line-height:14px;white-space:nowrap;color:#222">万全を期する為に、当日の発走時刻、出走馬、斤量、騎手、枠順等はＪＲＡ発行のものと照合してください。放牧先データは、原則として資料に基づいた表記としています。ご了承の上、ご活用ください。※本紙からの複製、転載、システムの転用を禁ずる。</div>
</body></html>
